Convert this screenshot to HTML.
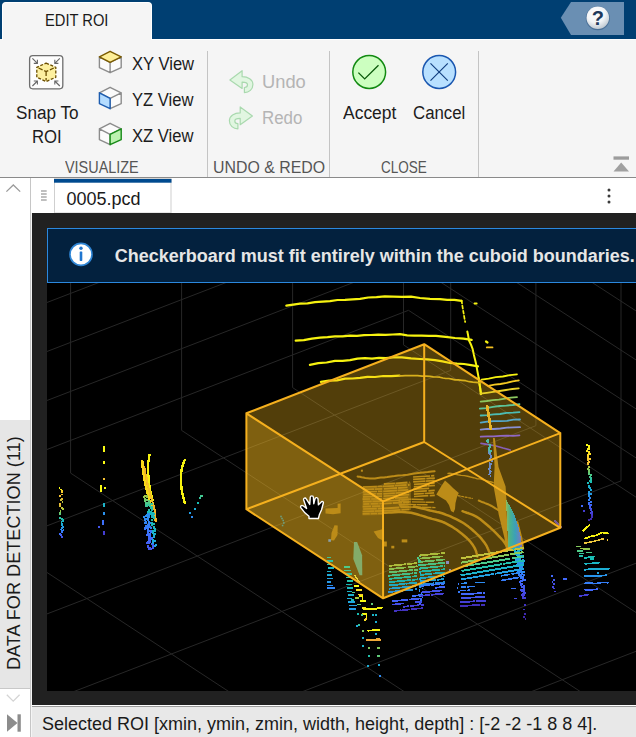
<!DOCTYPE html>
<html>
<head>
<meta charset="utf-8">
<title>Edit ROI</title>
<style>
html,body{margin:0;padding:0;}
body{width:636px;height:737px;overflow:hidden;position:relative;background:#f5f5f5;font-family:"Liberation Sans",sans-serif;color:#1a1a1a;}
.abs{position:absolute;}
#hdr{left:0;top:0;width:636px;height:39px;background:#003f72;}
#tab{left:2px;top:2px;width:150px;height:38px;background:#f5f5f5;border-radius:4px 4px 0 0;border:1px solid #fff;border-bottom:none;box-sizing:border-box;}
#tab span{position:absolute;left:42.3px;top:7.8px;font-size:17px;line-height:20px;color:#1a1a1a;white-space:nowrap;transform-origin:0 0;transform:scaleX(0.865);}
.t{position:absolute;white-space:nowrap;transform-origin:0 0;font-size:17.6px;color:#1c1c1c;line-height:20px;}
.dis{color:#b4b4b4;}
.lbl{position:absolute;white-space:nowrap;transform-origin:0 0;font-size:16.1px;color:#555;line-height:18px;}
.sep{position:absolute;width:1px;background:#c4c4c4;top:51px;height:126px;}
#tsb{left:0;top:177px;width:636px;height:1px;background:#8a8a8a;}
#tabbar{left:0;top:178px;width:636px;height:35px;background:#fff;}
#side{left:0;top:178px;width:30px;height:559px;background:#fff;border-right:1px solid #c6c6c6;}
#sidetab{left:0;top:419.5px;width:30px;height:269.5px;background:#e6e6e6;border-bottom:1px solid #c8c8c8;box-sizing:border-box;}
#dark{left:32px;top:213px;width:604px;height:492px;background:#212121;}
#axes{left:47px;top:228px;width:589px;height:463px;background:#000;overflow:hidden;}
#banner{left:47px;top:228px;width:600px;height:55px;background:#03213e;border:1px solid #2b88de;box-sizing:border-box;}
#status{left:32px;top:707px;width:604px;height:30px;background:#e8e8e8;}
</style>
</head>
<body>
<div id="hdr" class="abs"></div>
<div class="abs" style="left:152px;top:39px;width:484px;height:1px;background:#fff;"></div>
<div id="tab" class="abs"><span>EDIT ROI</span></div>

<!-- toolstrip content -->
<div class="t" style="left:15.6px;top:102.8px;transform:scaleX(0.975);">Snap To</div>
<div class="t" style="left:32.3px;top:126.8px;transform:scaleX(0.95);">ROI</div>
<div class="t" style="left:131.8px;top:53.8px;transform:scaleX(0.943);">XY View</div>
<div class="t" style="left:131.8px;top:89.8px;transform:scaleX(0.943);">YZ View</div>
<div class="t" style="left:131.8px;top:125.8px;transform:scaleX(0.943);">XZ View</div>
<div class="t dis" style="left:262.3px;top:71.8px;transform:scaleX(1.04);">Undo</div>
<div class="t dis" style="left:262.3px;top:107.8px;transform:scaleX(0.96);">Redo</div>
<div class="t" style="left:343px;top:102.8px;transform:scaleX(0.993);">Accept</div>
<div class="t" style="left:413.3px;top:102.8px;transform:scaleX(0.955);">Cancel</div>
<div class="lbl" style="left:65.4px;top:157.8px;transform:scaleX(0.896);">VISUALIZE</div>
<div class="lbl" style="left:212.6px;top:157.8px;transform:scaleX(0.987);">UNDO &amp; REDO</div>
<div class="lbl" style="left:380.6px;top:157.8px;transform:scaleX(0.84);">CLOSE</div>
<div class="sep" style="left:207px;"></div>
<div class="sep" style="left:329px;"></div>
<div class="sep" style="left:478px;"></div>

<svg class="abs" style="left:0;top:0;" width="636" height="178" viewBox="0 0 636 178">
<!-- help -->
<path d="M560.8,17.8 L571,2 L624,2 L624,35 L571,35 Z" fill="#6a8fb3"/>
<defs>
<radialGradient id="hg" cx="0.42" cy="0.3" r="0.75"><stop offset="0" stop-color="#ffffff"/><stop offset="0.55" stop-color="#f2f4f6"/><stop offset="1" stop-color="#b8c2cc"/></radialGradient>
</defs>
<circle cx="597.8" cy="18.3" r="12" fill="#2d5680" opacity="0.55"/>
<circle cx="597.8" cy="17.8" r="11.3" fill="url(#hg)"/>
<text x="597.8" y="25" text-anchor="middle" font-family="Liberation Sans, sans-serif" font-weight="bold" font-size="20" fill="#1f3a5c">?</text>
<!-- snap to roi -->
<rect x="29.6" y="55.6" width="33.2" height="33.2" rx="3.2" fill="#fdfdfd" stroke="#6e6e6e" stroke-width="1.3"/>
<path d="M46.1,63.1 L55.8,67.3 L55.8,77.3 L46.1,81.5 L36.8,77.3 L36.8,67.3 Z" fill="#fdf0a0"/>
<path d="M46.1,63.1 L55.8,67.3 L55.8,77.3 L46.1,81.5 L36.8,77.3 L36.8,67.3 Z" fill="none" stroke="#6b4e00" stroke-width="1.3" stroke-dasharray="3 1.6" stroke-linejoin="round"/>
<path d="M38.5,68 L46.1,71.6 L53.8,68 M46.1,71.6 L46.1,80.5" fill="none" stroke="#6b4e00" stroke-width="1.3" stroke-dasharray="4.5 1.8"/>
<g fill="none" stroke="#666" stroke-width="1.1">
<path d="M32.4,58.4 L37.4,63.4 M33.8,63.4 L37.4,63.4 L37.4,59.8"/>
<path d="M59.8,58.4 L54.8,63.4 M58.4,63.4 L54.8,63.4 L54.8,59.8"/>
<path d="M32.4,86 L37.4,81 M33.8,81 L37.4,81 L37.4,84.6"/>
<path d="M59.8,86 L54.8,81 M58.4,81 L54.8,81 L54.8,84.6"/>
</g>
<!-- cubes -->
<g id="cubeXY" stroke-linejoin="round" stroke-width="1.4">
<path d="M99.4,56.8 L110.1,62.4 L110.1,72.7 L99.4,67.6 Z M110.1,62.4 L121.2,56.8 L121.2,67.6 L110.1,72.7 Z" fill="#fbfbfb" stroke="#8c8c8c"/>
<path d="M110.1,51.3 L121.2,56.8 L110.1,62.4 L99.4,56.8 Z" fill="#fdee98" stroke="#7a5a00"/>
</g>
<g stroke-linejoin="round" stroke-width="1.4" transform="translate(0,36)">
<path d="M110.1,51.3 L121.2,56.8 L110.1,62.4 L99.4,56.8 Z M110.1,62.4 L121.2,56.8 L121.2,67.6 L110.1,72.7 Z" fill="#fbfbfb" stroke="#8c8c8c"/>
<path d="M99.4,56.8 L110.1,62.4 L110.1,72.7 L99.4,67.6 Z" fill="#b4dcff" stroke="#1c5cb0"/>
</g>
<g stroke-linejoin="round" stroke-width="1.4" transform="translate(0,72)">
<path d="M110.1,51.3 L121.2,56.8 L110.1,62.4 L99.4,56.8 Z M99.4,56.8 L110.1,62.4 L110.1,72.7 L99.4,67.6 Z" fill="#fbfbfb" stroke="#8c8c8c"/>
<path d="M110.1,62.4 L121.2,56.8 L121.2,67.6 L110.1,72.7 Z" fill="#bcf2b0" stroke="#178a17"/>
</g>
<!-- undo redo -->
<path id="undo" d="M229.9,79.9 L242.1,70.7 L242.1,76.7 C248,76.7 252.9,79.5 252.9,84.5 C252.9,89.5 249,92.6 244.4,92.6 L244.4,87.5 C246.5,87.5 247.5,86.3 247.5,84.8 C247.5,83 246,82.1 242.1,82.1 L242.1,88.5 Z" fill="#e1f6e1" stroke="#a9d9ae" stroke-width="1.2" stroke-linejoin="round"/>
<path d="M229.9,79.9 L242.1,70.7 L242.1,76.7 C248,76.7 252.9,79.5 252.9,84.5 C252.9,89.5 249,92.6 244.4,92.6 L244.4,87.5 C246.5,87.5 247.5,86.3 247.5,84.8 C247.5,83 246,82.1 242.1,82.1 L242.1,88.5 Z" fill="#e1f6e1" stroke="#a9d9ae" stroke-width="1.2" stroke-linejoin="round" transform="translate(482.3,36.2) scale(-1,1)"/>
<!-- accept cancel -->
<circle cx="369.2" cy="72" r="16.4" fill="#ccffc0" stroke="#128a12" stroke-width="1.5"/>
<path d="M358.4,72.6 L364.7,78.9 L378.5,65.2" fill="none" stroke="#0a5a0a" stroke-width="1.3"/>
<circle cx="439.2" cy="72" r="16.4" fill="#b8e0ff" stroke="#1a57b0" stroke-width="1.5"/>
<path d="M430.5,63.4 L447.8,80.7 M447.8,63.4 L430.5,80.7" fill="none" stroke="#123f80" stroke-width="1.2"/>
<!-- collapse -->
<rect x="613.5" y="156.4" width="15.5" height="3.3" fill="#9c9c9c"/>
<path d="M621.2,162.4 L629,171.4 L613.5,171.4 Z" fill="#a0a0a0"/>
</svg>
<div id="tsb" class="abs"></div>
<div id="tabbar" class="abs"></div>
<div id="side" class="abs"></div>
<div id="sidetab" class="abs"></div>
<svg class="abs" style="left:0;top:178px;" width="636" height="36" viewBox="0 178 636 36">
<path d="M6.4,191.6 L13.3,185 L20.2,191.6" fill="none" stroke="#9a9a9a" stroke-width="1.3"/>
<path d="M41,191 H46.7 M41,194 H46.7 M41,197 H46.7 M41,200 H46.7" stroke="#808080" stroke-width="1.2" fill="none"/>
<rect x="54.5" y="178.6" width="116.5" height="34.4" fill="#fff" stroke="#cfcfcf" stroke-width="1"/>
<rect x="54" y="179" width="117.5" height="3.7" fill="#004a8f"/>
<circle cx="609" cy="190" r="1.5" fill="#3a3a3a"/><circle cx="609" cy="196" r="1.5" fill="#3a3a3a"/><circle cx="609" cy="202" r="1.5" fill="#3a3a3a"/>
</svg>
<div class="abs" style="left:66.4px;top:188.8px;font-size:18px;line-height:20px;color:#1a1a1a;white-space:nowrap;">0005.pcd</div>
<div id="dark" class="abs"></div>
<div id="axes" class="abs"><!--SCENE_START--><svg style="position:absolute;left:0;top:0;" width="589" height="463" viewBox="47 228 589 463" shape-rendering="crispEdges">
<g shape-rendering="auto">
<line x1="70.6" y1="282.0" x2="70.6" y2="473.1" stroke="#272727" stroke-width="1"/>
<line x1="70.6" y1="473.1" x2="490.6" y2="748.2" stroke="#272727" stroke-width="1"/>
<line x1="181.6" y1="282.0" x2="181.6" y2="430.4" stroke="#272727" stroke-width="1"/>
<line x1="181.6" y1="430.4" x2="601.6" y2="705.5" stroke="#272727" stroke-width="1"/>
<line x1="292.6" y1="282.0" x2="292.6" y2="387.6" stroke="#272727" stroke-width="1"/>
<line x1="292.6" y1="387.6" x2="712.6" y2="662.7" stroke="#272727" stroke-width="1"/>
<line x1="403.5" y1="282.0" x2="403.5" y2="344.9" stroke="#272727" stroke-width="1"/>
<line x1="403.5" y1="344.9" x2="823.5" y2="620.0" stroke="#272727" stroke-width="1"/>
<line x1="-40.0" y1="515.5" x2="360.0" y2="777.5" stroke="#272727" stroke-width="1"/>
<line x1="450.7" y1="282.0" x2="450.7" y2="370.4" stroke="#272727" stroke-width="1"/>
<line x1="450.7" y1="370.4" x2="-309.3" y2="663.0" stroke="#272727" stroke-width="1"/>
<line x1="535.9" y1="282.0" x2="535.9" y2="425.7" stroke="#272727" stroke-width="1"/>
<line x1="535.9" y1="425.7" x2="-224.1" y2="718.3" stroke="#272727" stroke-width="1"/>
<line x1="621.0" y1="282.0" x2="621.0" y2="480.9" stroke="#272727" stroke-width="1"/>
<line x1="621.0" y1="480.9" x2="-139.0" y2="773.5" stroke="#272727" stroke-width="1"/>
<line x1="706.2" y1="282.0" x2="706.2" y2="536.2" stroke="#272727" stroke-width="1"/>
<line x1="706.2" y1="536.2" x2="-53.8" y2="828.8" stroke="#272727" stroke-width="1"/>
<line x1="791.4" y1="282.0" x2="791.4" y2="591.5" stroke="#272727" stroke-width="1"/>
<line x1="791.4" y1="591.5" x2="31.4" y2="884.1" stroke="#272727" stroke-width="1"/>
<line x1="408.5" y1="114.3" x2="8.5" y2="268.3" stroke="#272727" stroke-width="1"/>
<line x1="408.5" y1="114.3" x2="668.5" y2="283.0" stroke="#272727" stroke-width="1"/>
<line x1="408.5" y1="163.3" x2="8.5" y2="317.3" stroke="#272727" stroke-width="1"/>
<line x1="408.5" y1="163.3" x2="668.5" y2="332.0" stroke="#272727" stroke-width="1"/>
<line x1="408.5" y1="212.3" x2="8.5" y2="366.3" stroke="#272727" stroke-width="1"/>
<line x1="408.5" y1="212.3" x2="668.5" y2="381.0" stroke="#272727" stroke-width="1"/>
<line x1="408.5" y1="261.3" x2="8.5" y2="415.3" stroke="#272727" stroke-width="1"/>
<line x1="408.5" y1="261.3" x2="668.5" y2="430.0" stroke="#272727" stroke-width="1"/>
<line x1="408.5" y1="310.3" x2="8.5" y2="464.3" stroke="#272727" stroke-width="1"/>
<line x1="408.5" y1="310.3" x2="668.5" y2="479.0" stroke="#272727" stroke-width="1"/>
</g>
<g shape-rendering="auto">
<path d="M286.3,305.7 L300.0,303.6 L307.5,303.3 L315.0,302.2 L322.5,301.6 L330.0,301.1 L337.5,300.0 L345.0,299.8 L352.5,299.3 L360.0,298.8 L368.2,297.5 L376.5,297.2 L384.8,296.4 L393.0,296.6 L402.0,296.9 L411.0,296.6 L420.0,298.0 L430.0,298.8 L440.0,299.2 L447.2,299.8 L454.4,299.9 L461.6,300.9" fill="none" stroke="#f6f210" stroke-width="2.2" stroke-linecap="round" stroke-linejoin="round"/>
<path d="M295.7,340.7 L303.8,340.2 L311.9,338.6 L320.0,337.7 L327.5,337.2 L335.0,336.4 L342.5,336.3 L350.0,335.7 L357.0,335.8 L364.0,335.2 L371.0,335.0 L378.2,334.7 L385.5,334.8 L392.8,334.5 L400.0,334.2 L407.2,335.3 L414.4,335.6 L421.6,335.7 L428.8,335.9 L436.0,335.8 L445.5,336.8 L455.0,338.0 L463.4,338.6 L471.7,339.9" fill="none" stroke="#f6f210" stroke-width="2.2" stroke-linecap="round" stroke-linejoin="round"/>
<path d="M309.9,364.8 L318.3,363.2 L326.6,362.5 L335.0,360.9 L342.5,360.9 L350.0,360.1 L357.5,358.6 L365.0,358.2 L372.0,358.7 L379.0,357.9 L386.0,358.2 L393.0,357.3 L402.0,357.4 L411.0,358.4 L420.0,359.0 L427.5,359.4 L435.0,360.1 L442.5,361.4 L450.0,363.0 L457.0,363.7 L464.0,364.0 L471.0,365.1 L478.0,366.3" fill="none" stroke="#f6f210" stroke-width="2.2" stroke-linecap="round" stroke-linejoin="round"/>
<path d="M320.9,381.8 L328.9,380.6 L337.0,380.4 L345.0,378.6 L352.5,378.5 L360.0,377.8 L367.5,376.9 L375.0,377.0 L383.2,376.0 L391.3,376.2 L399.5,375.7" fill="none" stroke="#f6f210" stroke-width="2.2" stroke-linecap="round" stroke-linejoin="round"/>
<path d="M461.6,300.5 L462.3,305.4 L463.0,309.7 L463.7,313.7 L464.5,318.6 L465.2,322.0" fill="none" stroke="#f6f210" stroke-width="1.7" stroke-linecap="round" stroke-linejoin="round" stroke-dasharray="3 2.2"/>
<path d="M467.3,331.4 L468.1,335.3 L469.0,340.5 L470.8,344.2 L472.6,348.9 L473.9,354.9 L475.2,360.2 L476.2,364.5 L477.3,370.6 L477.9,373.7 L478.6,377.7 L479.2,382.3 L479.8,385.8 L480.4,389.8 L481.0,394.0" fill="none" stroke="#f6f210" stroke-width="2.0" stroke-linecap="round" stroke-linejoin="round"/>
<path d="M474.6,303.4 L476.6,303.4" fill="none" stroke="#f6f210" stroke-width="2" stroke-linecap="round" stroke-linejoin="round"/>
<path d="M486.0,341.5 L487.5,342.5" fill="none" stroke="#f6f210" stroke-width="2.2" stroke-linecap="round" stroke-linejoin="round"/>
<path d="M486.8,347.4 L492.5,347.4" fill="none" stroke="#f4c020" stroke-width="1.8" stroke-linecap="round" stroke-linejoin="round"/>
</g>
<rect x="58.5" y="487.2" width="1.8" height="1.8" fill="#f9fb14"/>
<rect x="60.0" y="488.5" width="1.8" height="1.8" fill="#faec1d"/>
<rect x="61.2" y="490.1" width="1.8" height="1.8" fill="#fbdd26"/>
<rect x="60.9" y="491.4" width="1.8" height="1.8" fill="#fdce2f"/>
<rect x="61.1" y="493.5" width="1.8" height="1.8" fill="#fac532"/>
<rect x="58.9" y="494.9" width="1.8" height="1.8" fill="#f4c132"/>
<rect x="61.4" y="498.1" width="1.8" height="1.8" fill="#e6ba33"/>
<rect x="59.7" y="499.0" width="1.8" height="1.8" fill="#d1bf38"/>
<rect x="61.6" y="500.7" width="1.8" height="1.8" fill="#bcc33c"/>
<rect x="59.3" y="502.7" width="1.8" height="1.8" fill="#f2bf32"/>
<rect x="59.4" y="503.7" width="1.8" height="1.8" fill="#ecba32"/>
<rect x="58.7" y="505.3" width="1.8" height="1.8" fill="#d9bd36"/>
<rect x="61.4" y="507.1" width="1.8" height="1.8" fill="#c4c13a"/>
<rect x="61.7" y="508.3" width="1.8" height="1.8" fill="#aec63f"/>
<rect x="59.5" y="510.0" width="1.8" height="1.8" fill="#95c94e"/>
<rect x="59.2" y="511.5" width="1.8" height="1.8" fill="#7aca64"/>
<rect x="59.0" y="513.0" width="1.8" height="1.8" fill="#60ca7a"/>
<rect x="61.1" y="517.8" width="1.8" height="1.8" fill="#27c1a9"/>
<rect x="58.8" y="517.3" width="1.8" height="1.8" fill="#27c1a9"/>
<rect x="62.2" y="518.9" width="1.8" height="1.8" fill="#19bdb6"/>
<rect x="60.5" y="521.0" width="1.8" height="1.8" fill="#1bb6c3"/>
<rect x="62.4" y="520.4" width="1.8" height="1.8" fill="#1bb6c3"/>
<rect x="61.4" y="522.6" width="1.8" height="1.8" fill="#1cb0d0"/>
<rect x="61.3" y="522.6" width="1.8" height="1.8" fill="#1cb0d0"/>
<rect x="61.3" y="524.2" width="1.8" height="1.8" fill="#1eaadc"/>
<rect x="61.7" y="525.7" width="1.8" height="1.8" fill="#23a1e3"/>
<rect x="61.2" y="526.8" width="1.8" height="1.8" fill="#2797ea"/>
<rect x="61.1" y="526.6" width="1.8" height="1.8" fill="#2797ea"/>
<rect x="62.6" y="528.7" width="1.8" height="1.8" fill="#2c8ef2"/>
<rect x="60.3" y="528.6" width="1.8" height="1.8" fill="#2c8ef2"/>
<rect x="60.5" y="530.2" width="1.8" height="1.8" fill="#3283f6"/>
<rect x="61.7" y="529.6" width="1.8" height="1.8" fill="#3283f6"/>
<rect x="60.7" y="531.3" width="1.8" height="1.8" fill="#3878f9"/>
<rect x="60.8" y="531.6" width="1.8" height="1.8" fill="#3878f9"/>
<rect x="58.9" y="532.9" width="1.8" height="1.8" fill="#3e6dfc"/>
<rect x="59.7" y="534.3" width="1.8" height="1.8" fill="#4262f7"/>
<rect x="60.7" y="536.4" width="1.8" height="1.8" fill="#4456ec"/>
<rect x="61.6" y="535.9" width="1.8" height="1.8" fill="#4456ec"/>
<rect x="102.6" y="445.5" width="2.2" height="6" fill="#f9fb14"/>
<rect x="103.2" y="460.5" width="2.2" height="3" fill="#f9fb14"/>
<rect x="103.0" y="477.5" width="2.2" height="2" fill="#f4c032"/>
<rect x="99.5" y="484.5" width="2.2" height="7" fill="#f9fb14"/>
<rect x="103.5" y="486.5" width="2.2" height="2" fill="#f9fb14"/>
<rect x="102.8" y="502.5" width="2.2" height="4" fill="#1cb4c8"/>
<rect x="102.8" y="512.2" width="2.2" height="2.5" fill="#2a92ee"/>
<rect x="102.2" y="519.5" width="2.2" height="5" fill="#3d70fb"/>
<rect x="98.2" y="525.5" width="2.2" height="2" fill="#4456ec"/>
<rect x="102.6" y="530.5" width="2.2" height="4" fill="#443dd2"/>
<path d="M149.6,454.7 L149.5,455.3 L149.3,456.2 L149.2,457.3 L149.0,458.4 L148.8,459.6 L148.6,460.8 L148.4,462.0 L148.3,463.0 L148.2,463.9 L148.1,464.6 L148.1,465.3 L148.0,466.0 L148.0,466.8 L148.0,467.6 L148.0,468.7 L148.1,470.0 L148.2,471.6 L148.3,473.4 L148.4,475.4 L148.6,477.6 L148.8,479.8 L149.0,481.9 L149.2,484.0 L149.5,486.0 L149.8,487.9 L150.2,490.0 L150.6,492.0 L151.1,494.0 L151.5,495.9 L151.9,497.5 L152.3,498.9 L152.5,500.0" fill="none" stroke="#f6f210" stroke-width="2.3" stroke-linecap="round" stroke-linejoin="round"/>
<path d="M142.2,460.7 L142.3,461.4 L142.3,462.3 L142.4,463.4 L142.5,464.6 L142.6,465.9 L142.7,467.3 L142.8,468.6 L143.0,470.0 L143.2,471.4 L143.4,472.7 L143.6,474.2 L143.8,475.6 L144.1,477.2 L144.4,478.7 L144.7,480.3 L145.0,482.0 L145.4,483.8 L145.8,485.6 L146.2,487.6 L146.7,489.6 L147.2,491.5 L147.7,493.5 L148.1,495.3 L148.5,497.0 L148.9,498.6 L149.3,500.3 L149.6,501.9 L150.0,503.4 L150.3,504.9 L150.6,506.1 L150.8,507.2 L151.0,508.0" fill="none" stroke="#f8d818" stroke-width="2.5" stroke-linecap="round" stroke-linejoin="round"/>
<path d="M144.4,467.4 L144.6,468.5 L144.8,470.0 L145.1,471.8 L145.5,473.8 L145.8,475.9 L146.2,478.0 L146.6,480.1 L147.0,482.0 L147.4,483.9 L147.9,485.8 L148.4,487.7 L148.9,489.6 L149.5,491.5 L150.0,493.4 L150.5,495.2 L151.0,497.0 L151.5,498.7 L152.0,500.4 L152.5,502.1 L153.0,503.8 L153.5,505.4 L153.9,506.9 L154.3,508.5 L154.6,510.0 L154.9,511.5 L155.1,513.1 L155.2,514.8 L155.3,516.3 L155.4,517.8 L155.5,519.1 L155.5,520.2 L155.6,521.0" fill="none" stroke="#f2b428" stroke-width="2.1" stroke-linecap="round" stroke-linejoin="round"/>
<path d="M146.4,476.0 L146.6,477.1 L146.8,478.5 L147.1,480.2 L147.5,482.1 L147.8,484.1 L148.2,486.2 L148.6,488.2 L149.0,490.0 L149.5,491.8 L150.0,493.8 L150.6,495.9 L151.2,497.9 L151.7,499.8 L152.2,501.5 L152.7,502.9 L153.0,504.0" fill="none" stroke="#f4c428" stroke-width="1.8" stroke-linecap="round" stroke-linejoin="round"/>
<rect x="145.7" y="495.3" width="2.0" height="2.0" fill="#a5c841"/>
<rect x="144.0" y="495.1" width="2.0" height="2.0" fill="#a5c841"/>
<rect x="143.3" y="496.2" width="2.0" height="2.0" fill="#96c94d"/>
<rect x="146.4" y="496.4" width="2.0" height="2.0" fill="#96c94d"/>
<rect x="143.8" y="497.5" width="2.0" height="2.0" fill="#87c959"/>
<rect x="144.3" y="498.7" width="2.0" height="2.0" fill="#78ca66"/>
<rect x="145.6" y="498.6" width="2.0" height="2.0" fill="#78ca66"/>
<rect x="148.4" y="500.0" width="2.0" height="2.0" fill="#6aca72"/>
<rect x="143.7" y="500.3" width="2.0" height="2.0" fill="#6aca72"/>
<rect x="147.5" y="501.3" width="2.0" height="2.0" fill="#5bcb7e"/>
<rect x="147.9" y="500.9" width="2.0" height="2.0" fill="#5bcb7e"/>
<rect x="146.5" y="502.1" width="2.0" height="2.0" fill="#4dca89"/>
<rect x="145.3" y="502.2" width="2.0" height="2.0" fill="#4dca89"/>
<rect x="147.5" y="502.5" width="2.0" height="2.0" fill="#4dca89"/>
<rect x="148.0" y="504.0" width="2.0" height="2.0" fill="#44c891"/>
<rect x="145.4" y="503.7" width="2.0" height="2.0" fill="#44c891"/>
<rect x="144.6" y="505.0" width="2.0" height="2.0" fill="#3ac699"/>
<rect x="145.6" y="504.8" width="2.0" height="2.0" fill="#3ac699"/>
<rect x="148.7" y="505.0" width="2.0" height="2.0" fill="#3ac699"/>
<rect x="149.8" y="502.9" width="2.0" height="2.0" fill="#3ac699"/>
<rect x="150.5" y="502.7" width="2.0" height="2.0" fill="#3ac699"/>
<rect x="146.8" y="504.3" width="2.0" height="2.0" fill="#34c49e"/>
<rect x="151.0" y="505.5" width="2.0" height="2.0" fill="#2ec3a3"/>
<rect x="150.9" y="505.8" width="2.0" height="2.0" fill="#2ec3a3"/>
<rect x="149.9" y="506.7" width="2.0" height="2.0" fill="#28c2a8"/>
<rect x="151.0" y="508.3" width="2.0" height="2.0" fill="#22c0ad"/>
<rect x="147.8" y="508.5" width="2.0" height="2.0" fill="#22c0ad"/>
<rect x="151.1" y="509.4" width="2.0" height="2.0" fill="#1cbfb2"/>
<rect x="148.9" y="510.5" width="2.0" height="2.0" fill="#19bdb6"/>
<rect x="150.0" y="511.0" width="2.0" height="2.0" fill="#19bdb6"/>
<rect x="147.1" y="511.0" width="2.0" height="2.0" fill="#19bdb6"/>
<rect x="151.6" y="511.8" width="2.0" height="2.0" fill="#1abbbb"/>
<rect x="151.5" y="511.8" width="2.0" height="2.0" fill="#1abbbb"/>
<rect x="150.0" y="512.3" width="2.0" height="2.0" fill="#1abbbb"/>
<rect x="151.2" y="513.8" width="2.0" height="2.0" fill="#1ab8bf"/>
<rect x="152.7" y="513.1" width="2.0" height="2.0" fill="#1ab8bf"/>
<rect x="150.3" y="513.2" width="2.0" height="2.0" fill="#1ab8bf"/>
<rect x="151.1" y="514.7" width="2.0" height="2.0" fill="#1bb6c4"/>
<rect x="150.7" y="514.5" width="2.0" height="2.0" fill="#1bb6c4"/>
<rect x="152.3" y="515.0" width="2.0" height="2.0" fill="#1bb6c4"/>
<rect x="152.6" y="516.4" width="2.0" height="2.0" fill="#1cb4c8"/>
<rect x="150.9" y="515.8" width="2.0" height="2.0" fill="#1cb4c8"/>
<rect x="150.5" y="516.1" width="2.0" height="2.0" fill="#1cb4c8"/>
<rect x="148.3" y="513.0" width="2.0" height="2.0" fill="#2a92ee"/>
<rect x="147.3" y="513.1" width="2.0" height="2.0" fill="#2a92ee"/>
<rect x="146.6" y="512.7" width="2.0" height="2.0" fill="#2a92ee"/>
<rect x="145.1" y="514.6" width="2.0" height="2.0" fill="#2b90f0"/>
<rect x="145.5" y="513.9" width="2.0" height="2.0" fill="#2b90f0"/>
<rect x="147.7" y="515.7" width="2.0" height="2.0" fill="#2c8ef1"/>
<rect x="144.7" y="515.2" width="2.0" height="2.0" fill="#2c8ef1"/>
<rect x="148.3" y="515.1" width="2.0" height="2.0" fill="#2c8ef1"/>
<rect x="143.1" y="516.4" width="2.0" height="2.0" fill="#2d8df2"/>
<rect x="147.0" y="516.5" width="2.0" height="2.0" fill="#2d8df2"/>
<rect x="146.6" y="516.3" width="2.0" height="2.0" fill="#2d8df2"/>
<rect x="143.8" y="517.8" width="2.0" height="2.0" fill="#2e8bf3"/>
<rect x="144.2" y="517.9" width="2.0" height="2.0" fill="#2e8bf3"/>
<rect x="145.3" y="517.8" width="2.0" height="2.0" fill="#2e8bf3"/>
<rect x="144.1" y="518.8" width="2.0" height="2.0" fill="#2f89f4"/>
<rect x="147.0" y="519.1" width="2.0" height="2.0" fill="#2f89f4"/>
<rect x="146.9" y="519.3" width="2.0" height="2.0" fill="#2f89f4"/>
<rect x="147.8" y="520.5" width="2.0" height="2.0" fill="#3087f5"/>
<rect x="145.2" y="520.6" width="2.0" height="2.0" fill="#3087f5"/>
<rect x="149.5" y="521.8" width="2.0" height="2.0" fill="#3185f5"/>
<rect x="144.9" y="521.6" width="2.0" height="2.0" fill="#3185f5"/>
<rect x="144.0" y="521.7" width="2.0" height="2.0" fill="#3185f5"/>
<rect x="148.3" y="522.4" width="2.0" height="2.0" fill="#3283f6"/>
<rect x="147.7" y="522.3" width="2.0" height="2.0" fill="#3283f6"/>
<rect x="147.7" y="523.0" width="2.0" height="2.0" fill="#3283f6"/>
<rect x="146.8" y="524.1" width="2.0" height="2.0" fill="#3481f6"/>
<rect x="147.9" y="523.6" width="2.0" height="2.0" fill="#3481f6"/>
<rect x="144.5" y="524.7" width="2.0" height="2.0" fill="#357ef7"/>
<rect x="147.0" y="525.1" width="2.0" height="2.0" fill="#357ef7"/>
<rect x="145.0" y="524.8" width="2.0" height="2.0" fill="#357ef7"/>
<rect x="150.0" y="526.6" width="2.0" height="2.0" fill="#367cf7"/>
<rect x="144.4" y="526.6" width="2.0" height="2.0" fill="#367cf7"/>
<rect x="148.6" y="526.1" width="2.0" height="2.0" fill="#367cf7"/>
<rect x="147.2" y="527.4" width="2.0" height="2.0" fill="#377af8"/>
<rect x="144.2" y="527.6" width="2.0" height="2.0" fill="#377af8"/>
<rect x="145.2" y="527.4" width="2.0" height="2.0" fill="#377af8"/>
<rect x="146.7" y="528.4" width="2.0" height="2.0" fill="#3878f9"/>
<rect x="147.4" y="528.3" width="2.0" height="2.0" fill="#3878f9"/>
<rect x="148.7" y="530.2" width="2.0" height="2.0" fill="#3976f9"/>
<rect x="146.9" y="530.0" width="2.0" height="2.0" fill="#3976f9"/>
<rect x="150.3" y="530.1" width="2.0" height="2.0" fill="#3976f9"/>
<rect x="150.0" y="531.3" width="2.0" height="2.0" fill="#3b74fa"/>
<rect x="149.5" y="531.0" width="2.0" height="2.0" fill="#3b74fa"/>
<rect x="148.9" y="532.5" width="2.0" height="2.0" fill="#3c72fa"/>
<rect x="147.1" y="532.5" width="2.0" height="2.0" fill="#3c72fa"/>
<rect x="146.8" y="532.3" width="2.0" height="2.0" fill="#3c72fa"/>
<rect x="147.0" y="533.6" width="2.0" height="2.0" fill="#3d70fb"/>
<rect x="146.2" y="533.9" width="2.0" height="2.0" fill="#3d70fb"/>
<rect x="146.9" y="533.6" width="2.0" height="2.0" fill="#3d70fb"/>
<rect x="148.2" y="534.6" width="2.0" height="2.0" fill="#3e6efc"/>
<rect x="149.2" y="534.9" width="2.0" height="2.0" fill="#3e6efc"/>
<rect x="148.8" y="536.1" width="2.0" height="2.0" fill="#3f6cfc"/>
<rect x="147.5" y="535.6" width="2.0" height="2.0" fill="#3f6cfc"/>
<rect x="147.5" y="536.8" width="2.0" height="2.0" fill="#406afd"/>
<rect x="150.7" y="537.2" width="2.0" height="2.0" fill="#406afd"/>
<rect x="151.1" y="537.2" width="2.0" height="2.0" fill="#406afd"/>
<rect x="150.3" y="538.0" width="2.0" height="2.0" fill="#4168fc"/>
<rect x="150.0" y="538.0" width="2.0" height="2.0" fill="#4168fc"/>
<rect x="148.4" y="539.3" width="2.0" height="2.0" fill="#4166fa"/>
<rect x="149.2" y="539.2" width="2.0" height="2.0" fill="#4166fa"/>
<rect x="148.8" y="540.8" width="2.0" height="2.0" fill="#4263f8"/>
<rect x="147.4" y="540.9" width="2.0" height="2.0" fill="#4263f8"/>
<rect x="147.5" y="542.1" width="2.0" height="2.0" fill="#4261f6"/>
<rect x="145.9" y="541.8" width="2.0" height="2.0" fill="#4261f6"/>
<rect x="146.7" y="542.2" width="2.0" height="2.0" fill="#4261f6"/>
<rect x="151.3" y="543.4" width="2.0" height="2.0" fill="#425ff4"/>
<rect x="151.9" y="543.5" width="2.0" height="2.0" fill="#425ff4"/>
<rect x="151.4" y="543.1" width="2.0" height="2.0" fill="#425ff4"/>
<rect x="151.9" y="544.2" width="2.0" height="2.0" fill="#435df2"/>
<rect x="151.7" y="544.6" width="2.0" height="2.0" fill="#435df2"/>
<rect x="152.0" y="544.6" width="2.0" height="2.0" fill="#435df2"/>
<rect x="146.9" y="545.7" width="2.0" height="2.0" fill="#435af0"/>
<rect x="147.4" y="545.2" width="2.0" height="2.0" fill="#435af0"/>
<rect x="147.0" y="545.5" width="2.0" height="2.0" fill="#435af0"/>
<rect x="149.1" y="546.6" width="2.0" height="2.0" fill="#4358ee"/>
<rect x="148.9" y="547.0" width="2.0" height="2.0" fill="#4358ee"/>
<rect x="152.3" y="547.2" width="2.0" height="2.0" fill="#4358ee"/>
<rect x="147.9" y="547.7" width="2.0" height="2.0" fill="#4456ec"/>
<rect x="150.2" y="547.9" width="2.0" height="2.0" fill="#4456ec"/>
<rect x="152.6" y="516.1" width="2.0" height="2.0" fill="#24c1ab"/>
<rect x="152.5" y="517.4" width="2.0" height="2.0" fill="#21c0ae"/>
<rect x="151.3" y="518.8" width="2.0" height="2.0" fill="#1ebfb0"/>
<rect x="150.9" y="521.9" width="2.0" height="2.0" fill="#19bcb8"/>
<rect x="152.9" y="522.9" width="2.0" height="2.0" fill="#1abbba"/>
<rect x="151.1" y="524.1" width="2.0" height="2.0" fill="#1ababc"/>
<rect x="152.8" y="525.8" width="2.0" height="2.0" fill="#1ab9bf"/>
<rect x="152.7" y="526.6" width="2.0" height="2.0" fill="#1bb8c1"/>
<rect x="153.7" y="528.4" width="2.0" height="2.0" fill="#1bb6c3"/>
<rect x="151.6" y="529.5" width="2.0" height="2.0" fill="#1bb5c6"/>
<rect x="153.9" y="530.3" width="2.0" height="2.0" fill="#1cb4c8"/>
<rect x="152.2" y="532.0" width="2.0" height="2.0" fill="#1cb3ca"/>
<rect x="153.7" y="533.3" width="2.0" height="2.0" fill="#1cb2cd"/>
<rect x="153.4" y="534.3" width="2.0" height="2.0" fill="#1cb0cf"/>
<rect x="153.0" y="536.2" width="2.0" height="2.0" fill="#1daed4"/>
<rect x="152.1" y="539.0" width="2.0" height="2.0" fill="#1eacd8"/>
<rect x="154.3" y="540.0" width="2.0" height="2.0" fill="#1eabdb"/>
<rect x="152.3" y="541.1" width="2.0" height="2.0" fill="#1ea9dd"/>
<rect x="152.4" y="542.4" width="2.0" height="2.0" fill="#1fa8de"/>
<rect x="154.6" y="543.6" width="2.0" height="2.0" fill="#20a6df"/>
<rect x="153.5" y="545.2" width="2.0" height="2.0" fill="#21a4e1"/>
<path d="M184.7,460.0 L184.5,460.5 L184.2,461.2 L183.9,462.1 L183.5,463.0 L183.2,464.0 L182.8,465.0 L182.5,466.0 L182.2,467.0 L182.0,468.0 L181.8,468.9 L181.6,469.9 L181.4,470.9 L181.3,472.0 L181.2,473.0 L181.1,474.0 L181.0,475.0 L180.9,476.0 L180.9,477.0 L180.9,478.0 L180.9,479.0 L180.9,480.0 L180.9,481.0 L180.9,482.0 L181.0,483.0 L181.1,484.0 L181.1,484.9 L181.2,485.8 L181.3,486.7 L181.4,487.7 L181.5,488.7 L181.7,489.8 L181.9,491.0 L182.2,492.4 L182.5,494.0 L182.9,495.8 L183.4,497.6 L183.8,499.3 L184.2,500.9 L184.5,502.2 L184.7,503.2" fill="none" stroke="#f6f210" stroke-width="2.5" stroke-linecap="round" stroke-linejoin="round"/>
<rect x="200.3" y="494.9" width="2.2" height="2.2" fill="#45c890"/>
<rect x="198.7" y="496.9" width="2.2" height="2.2" fill="#35c49d"/>
<rect x="196.9" y="501.9" width="2.2" height="2.2" fill="#19beb4"/>
<rect x="193.7" y="507.5" width="2.2" height="2.2" fill="#1daed4"/>
<rect x="189.1" y="512.2" width="2.2" height="2.2" fill="#249ee5"/>
<rect x="191.2" y="516.0" width="2.2" height="2.2" fill="#2d8cf3"/>
<polygon points="246.4,413.3 424.2,344.2 560.3,433.1 383.0,501.4" fill="#f5b91e" fill-opacity="0.335"/>
<polygon points="383.0,501.4 560.3,433.1 560.3,527.8 383.1,598.3" fill="#f5b91e" fill-opacity="0.35"/>
<polygon points="246.4,413.3 383.0,501.4 383.1,598.3 246.4,509.2" fill="#f4b81e" fill-opacity="0.52"/>
<g shape-rendering="auto">
<path d="M478.6,377.9 L479.2,381.7 L479.7,385.2 L480.2,388.1 L480.6,391.3 L481.0,394.0" fill="none" stroke="#f6f210" stroke-width="2.0" stroke-linecap="round" stroke-linejoin="round"/>
<path d="M481.6,379.6 L488.7,378.6 L495.8,377.2 L502.8,376.5 L509.9,375.1 L517.0,374.3" fill="none" stroke="#f6f210" stroke-width="1.8" stroke-linecap="round" stroke-linejoin="round"/>
<path d="M488.3,385.8 L494.4,384.7 L500.5,384.0 L506.6,382.9 L512.7,381.3 L518.8,380.4" fill="none" stroke="#f4c822" stroke-width="1.8" stroke-linecap="round" stroke-linejoin="round"/>
<path d="M480.4,393.7 L486.8,392.8 L493.2,391.9 L499.6,391.0 L506.0,390.0 L512.4,389.0 L518.8,388.3" fill="none" stroke="#e8d028" stroke-width="1.8" stroke-linecap="round" stroke-linejoin="round"/>
<path d="M480.7,401.6 L486.8,401.0 L492.8,400.1 L498.9,399.6 L504.9,398.6 L510.9,397.6 L517.0,397.1" fill="none" stroke="#8cc860" stroke-width="1.8" stroke-linecap="round" stroke-linejoin="round"/>
<path d="M479.8,408.7 L486.4,408.1 L493.0,406.9 L499.6,406.0 L506.3,405.6 L512.9,405.0 L519.5,404.2" fill="none" stroke="#5cc498" stroke-width="1.8" stroke-linecap="round" stroke-linejoin="round"/>
<path d="M480.7,415.5 L487.2,415.2 L493.6,414.4 L500.1,414.0 L506.6,412.9 L513.0,412.7 L519.5,412.1" fill="none" stroke="#4cbcb4" stroke-width="1.8" stroke-linecap="round" stroke-linejoin="round"/>
<path d="M480.7,422.7 L487.2,421.7 L493.8,421.2 L500.4,421.2 L506.9,420.8 L513.5,419.7 L520.0,419.5" fill="none" stroke="#54a8cc" stroke-width="1.8" stroke-linecap="round" stroke-linejoin="round"/>
<path d="M480.7,429.7 L487.2,428.9 L493.8,429.0 L500.4,428.5 L506.9,427.7 L513.5,427.3 L520.0,427.1" fill="none" stroke="#8890d4" stroke-width="1.8" stroke-linecap="round" stroke-linejoin="round"/>
<path d="M480.7,436.7 L487.2,436.3 L493.6,436.3 L500.1,435.8 L506.6,435.6 L513.0,435.9 L519.5,435.3" fill="none" stroke="#9068c4" stroke-width="1.8" stroke-linecap="round" stroke-linejoin="round"/>
<path d="M481.0,443.4 L488.5,444.6 L496.0,446.0 L503.1,448.1 L510.3,450.0" fill="none" stroke="#8860b8" stroke-width="1.6" stroke-linecap="round" stroke-linejoin="round"/>
<path d="M357.6,476.5 L358.7,476.8 L360.0,476.8 L361.5,477.3 L363.3,477.6 L365.3,478.0 L367.5,478.2 L369.8,478.4 L372.3,478.4 L374.9,478.4 L377.8,478.0 L380.8,477.6 L384.0,477.4 L387.3,477.1 L390.8,476.4 L394.5,476.0 L398.3,475.4 L402.6,475.3 L407.5,474.8 L412.8,473.8 L418.1,473.0 L423.2,472.4 L427.8,472.0 L431.7,471.4 L434.6,471.2" fill="none" stroke="#bc8c18" stroke-width="2.0" stroke-linecap="round" stroke-linejoin="round"/>
<rect x="360.9" y="469.7" width="2.0" height="2.0" fill="#bc8c18"/>
<path d="M448.0,473.5 L449.7,473.2 L452.1,473.7 L454.8,474.0 L457.9,474.8 L461.1,475.4 L464.4,475.6 L467.6,476.2 L470.6,477.0 L473.6,477.7 L476.8,478.7 L480.1,478.9 L483.3,479.8 L486.4,480.6 L489.1,481.4 L491.5,482.0 L493.2,482.6" fill="none" stroke="#bc8c18" stroke-width="1.4" stroke-linecap="round" stroke-linejoin="round"/>
<polygon points="362.5,486.0 383.0,485.5 383.0,515.0 362.5,515.5" fill="#bc8c18" opacity="0.4"/>
<polygon points="383.0,485.0 411.0,482.5 411.0,510.0 383.0,512.5" fill="#bc8c18" opacity="0.4"/>
<path d="M399.5,375.8 L401.9,375.8 L405.1,375.6 L408.9,375.6 L413.2,375.7 L417.6,375.7 L422.0,376.2 L426.2,376.1 L430.0,376.4 L433.4,376.9 L436.6,377.0 L439.8,377.2 L442.8,378.0 L445.8,378.5 L448.8,378.5 L451.9,379.1 L455.0,379.8 L458.3,379.9 L461.9,380.3 L465.6,380.7 L469.3,381.7 L472.8,382.1 L475.9,382.3 L478.5,382.7 L480.5,383.0" fill="none" stroke="#d8b01c" stroke-width="1.7" stroke-linecap="round" stroke-linejoin="round"/>
<line x1="363.0" y1="487.0" x2="376.9" y2="486.6" stroke="#bc8c18" stroke-width="1.7"/>
<line x1="377.5" y1="486.5" x2="382.7" y2="486.4" stroke="#bc8c18" stroke-width="1.7"/>
<line x1="363.3" y1="489.4" x2="374.1" y2="489.1" stroke="#bc8c18" stroke-width="1.7"/>
<line x1="374.6" y1="489.1" x2="382.3" y2="488.9" stroke="#bc8c18" stroke-width="1.7"/>
<line x1="363.0" y1="491.9" x2="377.0" y2="491.5" stroke="#bc8c18" stroke-width="1.7"/>
<line x1="377.9" y1="491.4" x2="382.4" y2="491.3" stroke="#bc8c18" stroke-width="1.7"/>
<line x1="363.3" y1="494.3" x2="375.9" y2="493.9" stroke="#bc8c18" stroke-width="1.7"/>
<line x1="376.5" y1="493.9" x2="382.2" y2="493.8" stroke="#bc8c18" stroke-width="1.7"/>
<line x1="363.0" y1="496.8" x2="373.7" y2="496.5" stroke="#bc8c18" stroke-width="1.7"/>
<line x1="374.3" y1="496.4" x2="382.0" y2="496.2" stroke="#bc8c18" stroke-width="1.7"/>
<line x1="362.6" y1="499.2" x2="370.3" y2="499.0" stroke="#bc8c18" stroke-width="1.7"/>
<line x1="371.2" y1="499.0" x2="378.4" y2="498.8" stroke="#bc8c18" stroke-width="1.7"/>
<line x1="379.1" y1="498.8" x2="382.2" y2="498.7" stroke="#bc8c18" stroke-width="1.7"/>
<line x1="363.0" y1="501.7" x2="371.8" y2="501.4" stroke="#bc8c18" stroke-width="1.7"/>
<line x1="372.3" y1="501.4" x2="381.4" y2="501.1" stroke="#bc8c18" stroke-width="1.7"/>
<line x1="363.3" y1="504.1" x2="369.4" y2="503.9" stroke="#bc8c18" stroke-width="1.7"/>
<line x1="370.6" y1="503.9" x2="378.5" y2="503.7" stroke="#bc8c18" stroke-width="1.7"/>
<line x1="379.3" y1="503.6" x2="382.3" y2="503.6" stroke="#bc8c18" stroke-width="1.7"/>
<line x1="362.7" y1="506.6" x2="371.0" y2="506.3" stroke="#bc8c18" stroke-width="1.7"/>
<line x1="372.0" y1="506.3" x2="380.4" y2="506.1" stroke="#bc8c18" stroke-width="1.7"/>
<line x1="381.1" y1="506.0" x2="382.4" y2="506.0" stroke="#bc8c18" stroke-width="1.7"/>
<line x1="363.2" y1="509.0" x2="376.8" y2="508.6" stroke="#bc8c18" stroke-width="1.7"/>
<line x1="378.0" y1="508.6" x2="382.7" y2="508.4" stroke="#bc8c18" stroke-width="1.7"/>
<line x1="362.6" y1="511.5" x2="374.1" y2="511.2" stroke="#bc8c18" stroke-width="1.7"/>
<line x1="374.6" y1="511.1" x2="382.9" y2="510.9" stroke="#bc8c18" stroke-width="1.7"/>
<line x1="362.6" y1="513.9" x2="369.8" y2="513.7" stroke="#bc8c18" stroke-width="1.7"/>
<line x1="370.6" y1="513.7" x2="377.2" y2="513.5" stroke="#bc8c18" stroke-width="1.7"/>
<line x1="378.0" y1="513.5" x2="382.8" y2="513.3" stroke="#bc8c18" stroke-width="1.7"/>
<line x1="383.8" y1="484.0" x2="395.1" y2="483.3" stroke="#bc8c18" stroke-width="1.8"/>
<line x1="395.5" y1="483.3" x2="407.5" y2="482.5" stroke="#bc8c18" stroke-width="1.8"/>
<line x1="408.9" y1="482.4" x2="409.6" y2="482.4" stroke="#bc8c18" stroke-width="1.8"/>
<line x1="383.0" y1="486.4" x2="394.4" y2="485.8" stroke="#bc8c18" stroke-width="1.8"/>
<line x1="394.9" y1="485.7" x2="406.6" y2="485.0" stroke="#bc8c18" stroke-width="1.8"/>
<line x1="407.9" y1="485.0" x2="409.7" y2="484.8" stroke="#bc8c18" stroke-width="1.8"/>
<line x1="383.8" y1="488.9" x2="397.2" y2="488.0" stroke="#bc8c18" stroke-width="1.8"/>
<line x1="398.1" y1="488.0" x2="407.6" y2="487.4" stroke="#bc8c18" stroke-width="1.8"/>
<line x1="409.1" y1="487.3" x2="409.1" y2="487.3" stroke="#bc8c18" stroke-width="1.8"/>
<line x1="383.2" y1="491.3" x2="397.5" y2="490.5" stroke="#bc8c18" stroke-width="1.8"/>
<line x1="397.9" y1="490.5" x2="408.3" y2="489.8" stroke="#bc8c18" stroke-width="1.8"/>
<line x1="383.3" y1="493.8" x2="394.9" y2="493.1" stroke="#bc8c18" stroke-width="1.8"/>
<line x1="395.4" y1="493.1" x2="409.1" y2="492.2" stroke="#bc8c18" stroke-width="1.8"/>
<line x1="383.5" y1="496.2" x2="397.1" y2="495.4" stroke="#bc8c18" stroke-width="1.8"/>
<line x1="398.5" y1="495.3" x2="409.4" y2="494.7" stroke="#bc8c18" stroke-width="1.8"/>
<line x1="383.1" y1="498.7" x2="394.0" y2="498.0" stroke="#bc8c18" stroke-width="1.8"/>
<line x1="394.6" y1="498.0" x2="408.3" y2="497.2" stroke="#bc8c18" stroke-width="1.8"/>
<line x1="408.9" y1="497.1" x2="409.2" y2="497.1" stroke="#bc8c18" stroke-width="1.8"/>
<line x1="383.2" y1="501.1" x2="400.6" y2="500.1" stroke="#bc8c18" stroke-width="1.8"/>
<line x1="401.2" y1="500.1" x2="409.0" y2="499.6" stroke="#bc8c18" stroke-width="1.8"/>
<line x1="383.6" y1="503.6" x2="391.8" y2="503.1" stroke="#bc8c18" stroke-width="1.8"/>
<line x1="392.6" y1="503.0" x2="402.0" y2="502.5" stroke="#bc8c18" stroke-width="1.8"/>
<line x1="403.0" y1="502.4" x2="409.2" y2="502.0" stroke="#bc8c18" stroke-width="1.8"/>
<line x1="399.1" y1="505.1" x2="408.5" y2="504.5" stroke="#bc8c18" stroke-width="1.8"/>
<line x1="409.6" y1="504.5" x2="409.7" y2="504.4" stroke="#bc8c18" stroke-width="1.8"/>
<line x1="383.7" y1="508.5" x2="399.2" y2="507.5" stroke="#bc8c18" stroke-width="1.8"/>
<line x1="400.7" y1="507.4" x2="409.2" y2="506.9" stroke="#bc8c18" stroke-width="1.8"/>
<line x1="383.4" y1="510.9" x2="400.5" y2="509.9" stroke="#bc8c18" stroke-width="1.8"/>
<line x1="401.4" y1="509.8" x2="409.4" y2="509.4" stroke="#bc8c18" stroke-width="1.8"/>
<line x1="413.1" y1="477.0" x2="430.1" y2="476.0" stroke="#bc8c18" stroke-width="1.7"/>
<line x1="431.1" y1="475.9" x2="434.3" y2="475.7" stroke="#bc8c18" stroke-width="1.7"/>
<line x1="413.1" y1="479.4" x2="425.5" y2="478.7" stroke="#bc8c18" stroke-width="1.7"/>
<line x1="426.3" y1="478.7" x2="434.8" y2="478.1" stroke="#bc8c18" stroke-width="1.7"/>
<line x1="413.2" y1="481.9" x2="425.2" y2="481.2" stroke="#bc8c18" stroke-width="1.7"/>
<line x1="425.6" y1="481.1" x2="434.7" y2="480.6" stroke="#bc8c18" stroke-width="1.7"/>
<line x1="413.9" y1="484.3" x2="429.9" y2="483.3" stroke="#bc8c18" stroke-width="1.7"/>
<line x1="431.1" y1="483.3" x2="434.6" y2="483.1" stroke="#bc8c18" stroke-width="1.7"/>
<line x1="413.8" y1="486.8" x2="427.2" y2="485.9" stroke="#bc8c18" stroke-width="1.7"/>
<line x1="427.5" y1="485.9" x2="434.9" y2="485.5" stroke="#bc8c18" stroke-width="1.7"/>
<line x1="413.1" y1="489.2" x2="429.2" y2="488.3" stroke="#bc8c18" stroke-width="1.7"/>
<line x1="413.9" y1="491.6" x2="426.9" y2="490.9" stroke="#bc8c18" stroke-width="1.7"/>
<line x1="428.4" y1="490.8" x2="434.7" y2="490.4" stroke="#bc8c18" stroke-width="1.7"/>
<line x1="413.9" y1="494.1" x2="423.9" y2="493.5" stroke="#bc8c18" stroke-width="1.7"/>
<line x1="424.6" y1="493.5" x2="434.1" y2="492.9" stroke="#bc8c18" stroke-width="1.7"/>
<line x1="414.0" y1="496.5" x2="428.3" y2="495.7" stroke="#bc8c18" stroke-width="1.7"/>
<line x1="429.7" y1="495.6" x2="434.8" y2="495.3" stroke="#bc8c18" stroke-width="1.7"/>
<line x1="398.6" y1="499.0" x2="411.6" y2="499.3" stroke="#bc8c18" stroke-width="1.4"/>
<line x1="412.0" y1="499.3" x2="423.6" y2="499.5" stroke="#bc8c18" stroke-width="1.4"/>
<line x1="398.5" y1="501.6" x2="410.8" y2="501.9" stroke="#bc8c18" stroke-width="1.4"/>
<line x1="411.9" y1="501.9" x2="425.0" y2="502.1" stroke="#bc8c18" stroke-width="1.4"/>
<line x1="425.5" y1="502.2" x2="433.9" y2="502.3" stroke="#bc8c18" stroke-width="1.4"/>
<line x1="398.6" y1="504.2" x2="405.3" y2="504.3" stroke="#bc8c18" stroke-width="1.4"/>
<line x1="406.1" y1="504.4" x2="416.3" y2="504.6" stroke="#bc8c18" stroke-width="1.4"/>
<line x1="416.7" y1="504.6" x2="427.5" y2="504.8" stroke="#bc8c18" stroke-width="1.4"/>
<line x1="399.5" y1="506.8" x2="407.7" y2="507.0" stroke="#bc8c18" stroke-width="1.4"/>
<line x1="408.3" y1="507.0" x2="421.4" y2="507.3" stroke="#bc8c18" stroke-width="1.4"/>
<line x1="421.8" y1="507.3" x2="431.5" y2="507.5" stroke="#bc8c18" stroke-width="1.4"/>
<line x1="432.2" y1="507.5" x2="435.5" y2="507.6" stroke="#bc8c18" stroke-width="1.4"/>
<path d="M383.8,512.8 L385.7,512.7 L388.3,512.6 L391.3,512.4 L394.7,512.2 L398.2,512.1 L401.8,512.1 L405.2,512.2 L408.3,512.4 L411.2,512.8 L414.1,513.5 L417.0,514.2 L419.8,515.1 L422.5,515.9 L425.2,516.8 L427.7,517.6 L430.0,518.3 L432.1,518.9 L434.1,519.4 L435.8,519.8 L437.5,520.2 L439.1,520.7 L440.7,521.2 L442.4,521.8 L444.1,522.5 L445.9,523.3 L447.7,524.3 L449.5,525.3 L451.4,526.4 L453.2,527.5 L455.0,528.7 L456.7,529.8 L458.3,531.0 L459.9,532.2 L461.5,533.4 L463.0,534.7 L464.5,536.0 L465.9,537.2 L467.2,538.5 L468.5,539.7 L469.6,540.9 L470.6,542.0 L471.5,543.2 L472.3,544.3 L473.0,545.3 L473.7,546.4 L474.3,547.4 L474.8,548.4 L475.3,549.4 L475.7,550.4 L476.1,551.4 L476.4,552.5 L476.7,553.5 L476.9,554.4 L477.1,555.3 L477.3,556.0 L477.4,556.5" fill="none" stroke="#bc8c18" stroke-width="2.5" stroke-linecap="round" stroke-linejoin="round"/>
<path d="M414.0,506.5 L415.2,506.8 L416.9,507.2 L418.9,507.7 L421.1,508.3 L423.4,508.9 L425.8,509.4 L428.0,510.0 L430.0,510.5 L431.8,510.9 L433.6,511.3 L435.2,511.6 L436.9,512.0 L438.6,512.3 L440.3,512.8 L442.1,513.3 L444.1,514.0 L446.2,514.8 L448.5,515.7 L450.9,516.7 L453.3,517.8 L455.7,518.9 L458.1,520.1 L460.4,521.3 L462.5,522.5 L464.5,523.8 L466.5,525.2 L468.4,526.6 L470.2,528.1 L472.0,529.5 L473.6,531.0 L475.2,532.4 L476.7,533.8 L478.1,535.1 L479.3,536.4 L480.5,537.7 L481.6,538.9 L482.6,540.2 L483.5,541.4 L484.4,542.5 L485.2,543.7 L486.0,544.9 L486.7,546.1 L487.3,547.4 L487.8,548.6 L488.3,549.7 L488.7,550.7 L489.1,551.6 L489.4,552.2" fill="none" stroke="#bc8c18" stroke-width="2.5" stroke-linecap="round" stroke-linejoin="round"/>
<path d="M462.5,511.2 L463.6,511.6 L465.1,512.1 L466.8,512.7 L468.7,513.3 L470.8,514.1 L472.8,514.9 L474.8,515.9 L476.7,516.9 L478.5,518.0 L480.3,519.3 L482.1,520.7 L483.9,522.2 L485.7,523.7 L487.5,525.2 L489.2,526.7 L490.8,528.2 L492.4,529.6 L494.0,531.1 L495.5,532.6 L497.0,534.1 L498.4,535.6 L499.8,537.0 L501.0,538.3 L502.1,539.5 L503.1,540.6 L503.9,541.7 L504.7,542.8 L505.3,543.8 L505.9,544.6 L506.3,545.4 L506.8,546.1 L507.1,546.6" fill="none" stroke="#bc8c18" stroke-width="2.5" stroke-linecap="round" stroke-linejoin="round"/>
<path d="M478.8,500.6 L479.6,500.9 L480.8,501.4 L482.1,501.9 L483.6,502.4 L485.1,503.1 L486.6,503.7 L488.1,504.3 L489.4,504.9 L490.6,505.5 L491.9,506.2 L493.1,506.9 L494.3,507.6 L495.4,508.3 L496.4,508.9 L497.3,509.4 L497.9,509.8" fill="none" stroke="#bc8c18" stroke-width="2.1" stroke-linecap="round" stroke-linejoin="round"/>
<path d="M458.3,495.7 L472.4,498.5" fill="none" stroke="#bc8c18" stroke-width="1.2" stroke-linecap="round" stroke-linejoin="round" stroke-dasharray="2 1.5"/>
<polygon points="445.0,480.5 449.0,484.0 453.0,488.0 458.8,493.0 457.0,497.0 455.5,503.0 455.0,509.0 453.6,512.5 451.0,511.0 449.0,505.0 446.0,500.5 441.0,497.5 436.3,494.5 439.0,490.0 442.0,485.0" fill="#bc8c18"/>
<rect x="401.7" y="539.4" width="5.6" height="3" fill="#bc8c18"/>
<rect x="391.3" y="545.8" width="3" height="2.6" fill="#bc8c18"/>
<rect x="383.8" y="541.5" width="3" height="5" fill="#bc8c18"/>
<path d="M325.5,508.5 L337.6,508 L337.6,503.8 L340.6,503.6 L340.6,513.2 L333,514.2 L325.5,513.4 Z" fill="#bc8c18"/>
<path d="M334.5,525.3 L337.7,525.5 L337.5,535 L334,540.4 L331,540.2 L331.5,533 Z" fill="#bc8c18"/>
<rect x="328.3" y="539.2" width="2.6" height="2.6" fill="#8aa0a8"/>
<polygon points="383.0,529.0 383.0,540.4 378.0,538.0 373.6,531.5 378.5,530.2" fill="#bc8c18"/>
<polygon points="493.0,438.0 494.8,438.0 498.5,467.0 505.6,486.5 506.4,499.0 506.8,515.0 507.8,537.7 508.4,551.0 506.2,551.0 504.4,537.7 498.8,515.0 493.6,486.5 494.6,467.0" fill="#bc8c18"/>
<path d="M517.5,522.0 L521.5,538.0 L523.4,549.0" fill="none" stroke="#bc8c18" stroke-width="1.6" stroke-linecap="round" stroke-linejoin="round"/>
<rect x="280.2" y="515.7" width="1.6" height="1.6" fill="#6aa890" opacity="0.85"/>
<rect x="281.2" y="517.7" width="1.6" height="1.6" fill="#6aa890" opacity="0.85"/>
<rect x="282.4" y="519.7" width="1.6" height="1.6" fill="#6aa890" opacity="0.85"/>
<rect x="283.0" y="522.2" width="1.6" height="1.6" fill="#6aa890" opacity="0.85"/>
<rect x="281.8" y="524.7" width="1.6" height="1.6" fill="#6aa890" opacity="0.85"/>
<polygon points="354.0,542.0 357.1,542.0 362.1,555.2 362.3,575.3 359.6,575.3 353.3,559.0" fill="#84b070" opacity="0.95"/>
</g>
<defs><linearGradient id="wg" gradientUnits="userSpaceOnUse" x1="505" y1="0" x2="522" y2="0"><stop offset="0" stop-color="#a0c454"/><stop offset="0.3" stop-color="#48bc98"/><stop offset="0.6" stop-color="#38a8c8"/><stop offset="1" stop-color="#8478d0"/></linearGradient></defs>
<polygon points="505.6,498.8 510.5,507.0 515.0,516.0 518.5,527.0 520.8,537.7 523.0,549.5 508.4,551.0 507.8,537.7 506.8,515.0" fill="url(#wg)" opacity="0.92"/>
<rect x="518.4" y="546.9" width="2.0" height="2.0" fill="#1cb4c8"/>
<rect x="519.8" y="547.0" width="2.0" height="2.0" fill="#1cb4c8"/>
<rect x="520.5" y="547.1" width="2.0" height="2.0" fill="#1cb4c8"/>
<rect x="521.5" y="546.7" width="2.0" height="2.0" fill="#1cb4c8"/>
<rect x="513.7" y="547.1" width="2.0" height="2.0" fill="#1cb4c8"/>
<rect x="516.6" y="548.6" width="2.0" height="2.0" fill="#1cb2cc"/>
<rect x="520.0" y="548.1" width="2.0" height="2.0" fill="#1cb2cc"/>
<rect x="514.4" y="548.4" width="2.0" height="2.0" fill="#1cb2cc"/>
<rect x="512.6" y="548.4" width="2.0" height="2.0" fill="#1cb2cc"/>
<rect x="517.9" y="548.6" width="2.0" height="2.0" fill="#1cb2cc"/>
<rect x="514.0" y="549.3" width="2.0" height="2.0" fill="#1cb0d0"/>
<rect x="516.7" y="549.7" width="2.0" height="2.0" fill="#1cb0d0"/>
<rect x="520.2" y="549.4" width="2.0" height="2.0" fill="#1cb0d0"/>
<rect x="517.8" y="549.9" width="2.0" height="2.0" fill="#1cb0d0"/>
<rect x="514.1" y="550.9" width="2.0" height="2.0" fill="#1daed4"/>
<rect x="515.8" y="551.1" width="2.0" height="2.0" fill="#1daed4"/>
<rect x="515.3" y="551.1" width="2.0" height="2.0" fill="#1daed4"/>
<rect x="520.6" y="550.8" width="2.0" height="2.0" fill="#1daed4"/>
<rect x="514.3" y="551.2" width="2.0" height="2.0" fill="#1daed4"/>
<rect x="520.4" y="552.0" width="2.0" height="2.0" fill="#1eacd8"/>
<rect x="516.4" y="552.2" width="2.0" height="2.0" fill="#1eacd8"/>
<rect x="517.6" y="552.6" width="2.0" height="2.0" fill="#1eacd8"/>
<rect x="517.5" y="553.9" width="2.0" height="2.0" fill="#1eaadc"/>
<rect x="515.5" y="554.1" width="2.0" height="2.0" fill="#1eaadc"/>
<rect x="516.9" y="553.6" width="2.0" height="2.0" fill="#1eaadc"/>
<rect x="514.0" y="553.4" width="2.0" height="2.0" fill="#1eaadc"/>
<rect x="520.2" y="554.9" width="2.0" height="2.0" fill="#20a7de"/>
<rect x="518.5" y="554.9" width="2.0" height="2.0" fill="#20a7de"/>
<rect x="522.0" y="555.0" width="2.0" height="2.0" fill="#20a7de"/>
<rect x="522.4" y="555.2" width="2.0" height="2.0" fill="#20a7de"/>
<rect x="517.2" y="555.2" width="2.0" height="2.0" fill="#20a7de"/>
<rect x="516.8" y="556.6" width="2.0" height="2.0" fill="#21a4e1"/>
<rect x="521.7" y="556.4" width="2.0" height="2.0" fill="#21a4e1"/>
<rect x="521.3" y="556.4" width="2.0" height="2.0" fill="#21a4e1"/>
<rect x="515.9" y="557.7" width="2.0" height="2.0" fill="#22a1e3"/>
<rect x="518.8" y="557.5" width="2.0" height="2.0" fill="#22a1e3"/>
<rect x="515.9" y="557.8" width="2.0" height="2.0" fill="#22a1e3"/>
<rect x="517.9" y="558.2" width="2.0" height="2.0" fill="#22a1e3"/>
<rect x="521.7" y="558.9" width="2.0" height="2.0" fill="#249ee5"/>
<rect x="514.9" y="559.3" width="2.0" height="2.0" fill="#249ee5"/>
<rect x="516.6" y="558.8" width="2.0" height="2.0" fill="#249ee5"/>
<rect x="516.5" y="559.1" width="2.0" height="2.0" fill="#249ee5"/>
<rect x="516.8" y="560.4" width="2.0" height="2.0" fill="#269be8"/>
<rect x="522.5" y="560.4" width="2.0" height="2.0" fill="#269be8"/>
<rect x="520.6" y="560.8" width="2.0" height="2.0" fill="#269be8"/>
<rect x="517.4" y="561.8" width="2.0" height="2.0" fill="#2798ea"/>
<rect x="522.1" y="561.7" width="2.0" height="2.0" fill="#2798ea"/>
<rect x="519.1" y="561.5" width="2.0" height="2.0" fill="#2798ea"/>
<rect x="516.7" y="561.5" width="2.0" height="2.0" fill="#2798ea"/>
<rect x="519.9" y="562.8" width="2.0" height="2.0" fill="#2895ec"/>
<rect x="518.5" y="563.2" width="2.0" height="2.0" fill="#2895ec"/>
<rect x="520.8" y="563.0" width="2.0" height="2.0" fill="#2895ec"/>
<rect x="520.5" y="562.9" width="2.0" height="2.0" fill="#2895ec"/>
<rect x="517.5" y="564.7" width="2.0" height="2.0" fill="#2a92ee"/>
<rect x="518.4" y="564.8" width="2.0" height="2.0" fill="#2a92ee"/>
<rect x="517.6" y="564.4" width="2.0" height="2.0" fill="#2a92ee"/>
<rect x="515.6" y="564.2" width="2.0" height="2.0" fill="#2a92ee"/>
<rect x="520.0" y="566.1" width="2.0" height="2.0" fill="#2b8ff1"/>
<rect x="520.8" y="566.2" width="2.0" height="2.0" fill="#2b8ff1"/>
<rect x="520.9" y="566.0" width="2.0" height="2.0" fill="#2b8ff1"/>
<rect x="520.7" y="566.9" width="2.0" height="2.0" fill="#2d8cf3"/>
<rect x="518.8" y="566.9" width="2.0" height="2.0" fill="#2d8cf3"/>
<rect x="518.5" y="568.6" width="2.0" height="2.0" fill="#2f88f4"/>
<rect x="517.2" y="568.5" width="2.0" height="2.0" fill="#2f88f4"/>
<rect x="517.3" y="568.7" width="2.0" height="2.0" fill="#2f88f4"/>
<rect x="516.7" y="568.5" width="2.0" height="2.0" fill="#2f88f4"/>
<rect x="517.4" y="570.0" width="2.0" height="2.0" fill="#3185f5"/>
<rect x="520.4" y="570.1" width="2.0" height="2.0" fill="#3185f5"/>
<rect x="519.2" y="569.8" width="2.0" height="2.0" fill="#3185f5"/>
<rect x="519.3" y="569.6" width="2.0" height="2.0" fill="#3185f5"/>
<rect x="520.8" y="571.3" width="2.0" height="2.0" fill="#3382f6"/>
<rect x="518.3" y="570.9" width="2.0" height="2.0" fill="#3382f6"/>
<rect x="523.0" y="571.4" width="2.0" height="2.0" fill="#3382f6"/>
<rect x="521.4" y="571.0" width="2.0" height="2.0" fill="#3382f6"/>
<rect x="521.1" y="573.0" width="2.0" height="2.0" fill="#357ef7"/>
<rect x="520.9" y="573.0" width="2.0" height="2.0" fill="#357ef7"/>
<rect x="521.2" y="572.7" width="2.0" height="2.0" fill="#357ef7"/>
<rect x="519.9" y="573.8" width="2.0" height="2.0" fill="#377af8"/>
<rect x="523.2" y="573.9" width="2.0" height="2.0" fill="#377af8"/>
<rect x="518.3" y="574.0" width="2.0" height="2.0" fill="#377af8"/>
<rect x="519.7" y="574.4" width="2.0" height="2.0" fill="#377af8"/>
<rect x="518.7" y="573.8" width="2.0" height="2.0" fill="#377af8"/>
<rect x="519.1" y="575.0" width="2.0" height="2.0" fill="#3977f9"/>
<rect x="520.0" y="575.2" width="2.0" height="2.0" fill="#3977f9"/>
<rect x="521.5" y="575.5" width="2.0" height="2.0" fill="#3977f9"/>
<rect x="521.1" y="577.1" width="2.0" height="2.0" fill="#3b73fa"/>
<rect x="519.9" y="577.2" width="2.0" height="2.0" fill="#3b73fa"/>
<rect x="522.1" y="578.5" width="2.0" height="2.0" fill="#3d6ffb"/>
<rect x="523.5" y="578.6" width="2.0" height="2.0" fill="#3d6ffb"/>
<rect x="521.6" y="578.3" width="2.0" height="2.0" fill="#3d6ffb"/>
<rect x="520.3" y="579.6" width="2.0" height="2.0" fill="#406cfc"/>
<rect x="521.2" y="579.5" width="2.0" height="2.0" fill="#406cfc"/>
<rect x="520.0" y="579.5" width="2.0" height="2.0" fill="#406cfc"/>
<rect x="519.1" y="580.8" width="2.0" height="2.0" fill="#4168fc"/>
<rect x="519.0" y="581.4" width="2.0" height="2.0" fill="#4168fc"/>
<rect x="521.0" y="582.8" width="2.0" height="2.0" fill="#4264f8"/>
<rect x="519.5" y="582.9" width="2.0" height="2.0" fill="#4264f8"/>
<rect x="520.1" y="584.1" width="2.0" height="2.0" fill="#4260f5"/>
<rect x="521.0" y="585.7" width="2.0" height="2.0" fill="#435cf1"/>
<rect x="522.6" y="585.4" width="2.0" height="2.0" fill="#435cf1"/>
<rect x="522.9" y="587.2" width="2.0" height="2.0" fill="#4358ee"/>
<rect x="521.4" y="588.5" width="2.0" height="2.0" fill="#4454ea"/>
<rect x="523.3" y="588.6" width="2.0" height="2.0" fill="#4454ea"/>
<rect x="521.3" y="589.9" width="2.0" height="2.0" fill="#4450e7"/>
<rect x="520.4" y="589.4" width="2.0" height="2.0" fill="#4450e7"/>
<rect x="524.0" y="591.6" width="2.0" height="2.0" fill="#454ce3"/>
<rect x="522.8" y="591.2" width="2.0" height="2.0" fill="#454ce3"/>
<rect x="521.7" y="593.0" width="2.0" height="2.0" fill="#4548e0"/>
<rect x="523.2" y="593.8" width="2.0" height="2.0" fill="#4643dc"/>
<rect x="521.3" y="594.3" width="2.0" height="2.0" fill="#4643dc"/>
<rect x="521.7" y="595.2" width="2.0" height="2.0" fill="#4540d7"/>
<rect x="522.4" y="596.9" width="2.0" height="2.0" fill="#443dd2"/>
<rect x="523.7" y="597.3" width="2.0" height="2.0" fill="#443dd2"/>
<rect x="522.3" y="597.2" width="1.8" height="1.8" fill="#443dd2"/>
<rect x="523.7" y="604.1" width="1.8" height="1.8" fill="#4235c4"/>
<rect x="522.8" y="608.5" width="1.8" height="1.8" fill="#4130ba"/>
<rect x="523.9" y="613.1" width="1.8" height="1.8" fill="#3f2bb1"/>
<rect x="523.1" y="615.8" width="1.8" height="1.8" fill="#3f29ad"/>
<rect x="524.6" y="617.9" width="1.8" height="1.8" fill="#3e26a8"/>
<rect x="487.3" y="439.0" width="1.8" height="1.8" fill="#50b8a8"/>
<rect x="486.3" y="440.1" width="1.8" height="1.8" fill="#50b8a8"/>
<rect x="487.1" y="441.4" width="1.8" height="1.8" fill="#50b8a8"/>
<rect x="487.7" y="443.5" width="1.8" height="1.8" fill="#50b8a8"/>
<rect x="488.9" y="444.4" width="1.8" height="1.8" fill="#50b8a8"/>
<rect x="488.9" y="445.7" width="1.8" height="1.8" fill="#50b8a8"/>
<rect x="488.3" y="447.2" width="1.8" height="1.8" fill="#50b8a8"/>
<rect x="487.7" y="448.8" width="1.8" height="1.8" fill="#50b8a8"/>
<rect x="489.9" y="449.7" width="1.8" height="1.8" fill="#50b8a8"/>
<rect x="489.3" y="450.8" width="1.8" height="1.8" fill="#50b8a8"/>
<rect x="487.6" y="450.8" width="1.8" height="1.8" fill="#6c8cc8"/>
<rect x="488.3" y="452.6" width="1.8" height="1.8" fill="#6c8cc8"/>
<rect x="488.8" y="453.3" width="1.8" height="1.8" fill="#6c8cc8"/>
<rect x="490.3" y="454.7" width="1.8" height="1.8" fill="#6c8cc8"/>
<rect x="489.9" y="456.6" width="1.8" height="1.8" fill="#6c8cc8"/>
<rect x="488.7" y="457.9" width="1.8" height="1.8" fill="#6c8cc8"/>
<rect x="490.0" y="459.4" width="1.8" height="1.8" fill="#6c8cc8"/>
<rect x="490.7" y="460.2" width="1.8" height="1.8" fill="#6c8cc8"/>
<rect x="488.5" y="462.0" width="1.8" height="1.8" fill="#6c8cc8"/>
<rect x="489.7" y="462.7" width="1.8" height="1.8" fill="#6c8cc8"/>
<rect x="489.1" y="464.4" width="1.8" height="1.8" fill="#6c8cc8"/>
<rect x="489.1" y="465.7" width="1.8" height="1.8" fill="#6c8cc8"/>
<rect x="488.9" y="467.2" width="1.8" height="1.8" fill="#6c8cc8"/>
<rect x="488.4" y="468.1" width="1.8" height="1.8" fill="#6c8cc8"/>
<rect x="488.9" y="469.7" width="1.8" height="1.8" fill="#6c8cc8"/>
<rect x="490.6" y="470.6" width="1.8" height="1.8" fill="#6c8cc8"/>
<rect x="488.8" y="472.0" width="1.8" height="1.8" fill="#6c8cc8"/>
<rect x="488.4" y="473.5" width="1.8" height="1.8" fill="#6c8cc8"/>
<rect x="489.6" y="474.8" width="1.8" height="1.8" fill="#6c8cc8"/>
<path d="M487.1,406.3 L487.8,410.7 L488.4,413.8 L489.0,417.8 L489.6,420.6 L490.2,425.3 L490.8,428.6" fill="none" stroke="#e8b428" stroke-width="2.8" stroke-linecap="round" stroke-linejoin="round"/>
<line x1="388.6" y1="565.9" x2="406.2" y2="564.2" stroke="#b3c53e" stroke-width="1.8" stroke-opacity="0.92"/>
<line x1="407.3" y1="564.1" x2="416.6" y2="563.1" stroke="#b3c53e" stroke-width="1.8" stroke-opacity="0.92"/>
<line x1="389.4" y1="569.1" x2="406.4" y2="567.4" stroke="#8ec954" stroke-width="1.8" stroke-opacity="0.92"/>
<line x1="407.8" y1="567.3" x2="417.5" y2="566.3" stroke="#8ec954" stroke-width="1.8" stroke-opacity="0.92"/>
<line x1="389.0" y1="572.4" x2="412.8" y2="570.0" stroke="#66ca75" stroke-width="1.8" stroke-opacity="0.92"/>
<line x1="414.2" y1="569.9" x2="417.7" y2="569.6" stroke="#66ca75" stroke-width="1.8" stroke-opacity="0.92"/>
<line x1="388.2" y1="575.8" x2="413.2" y2="573.3" stroke="#44c891" stroke-width="1.8" stroke-opacity="0.92"/>
<line x1="414.3" y1="573.1" x2="416.7" y2="572.9" stroke="#44c891" stroke-width="1.8" stroke-opacity="0.92"/>
<line x1="388.9" y1="578.9" x2="411.1" y2="576.7" stroke="#2ac2a6" stroke-width="1.8" stroke-opacity="0.92"/>
<line x1="412.2" y1="576.6" x2="417.1" y2="576.1" stroke="#2ac2a6" stroke-width="1.8" stroke-opacity="0.92"/>
<line x1="389.4" y1="582.2" x2="410.9" y2="580.0" stroke="#1abbba" stroke-width="1.8" stroke-opacity="0.92"/>
<line x1="412.1" y1="579.9" x2="417.8" y2="579.3" stroke="#1abbba" stroke-width="1.8" stroke-opacity="0.92"/>
<line x1="388.6" y1="585.5" x2="404.6" y2="583.9" stroke="#1cb1cd" stroke-width="1.8" stroke-opacity="0.92"/>
<line x1="405.5" y1="583.8" x2="416.7" y2="582.7" stroke="#1cb1cd" stroke-width="1.8" stroke-opacity="0.92"/>
<line x1="389.4" y1="588.7" x2="416.2" y2="586.0" stroke="#20a7de" stroke-width="1.8" stroke-opacity="0.92"/>
<line x1="388.1" y1="592.1" x2="413.5" y2="589.5" stroke="#2799e9" stroke-width="1.8" stroke-opacity="0.92"/>
<line x1="414.8" y1="589.4" x2="416.7" y2="589.2" stroke="#2799e9" stroke-width="1.8" stroke-opacity="0.92"/>
<line x1="419.3" y1="555.5" x2="439.6" y2="553.4" stroke="#b3c53e" stroke-width="1.8" stroke-opacity="0.92"/>
<line x1="440.6" y1="553.3" x2="445.1" y2="552.9" stroke="#b3c53e" stroke-width="1.8" stroke-opacity="0.92"/>
<line x1="420.2" y1="558.6" x2="442.5" y2="556.4" stroke="#92c950" stroke-width="1.8" stroke-opacity="0.92"/>
<line x1="443.9" y1="556.3" x2="444.2" y2="556.2" stroke="#92c950" stroke-width="1.8" stroke-opacity="0.92"/>
<line x1="419.2" y1="562.0" x2="434.7" y2="560.5" stroke="#6eca6e" stroke-width="1.8" stroke-opacity="0.92"/>
<line x1="436.0" y1="560.3" x2="445.4" y2="559.4" stroke="#6eca6e" stroke-width="1.8" stroke-opacity="0.92"/>
<line x1="420.3" y1="565.2" x2="444.6" y2="562.7" stroke="#4cca8a" stroke-width="1.8" stroke-opacity="0.92"/>
<line x1="419.3" y1="568.5" x2="443.3" y2="566.1" stroke="#35c59d" stroke-width="1.8" stroke-opacity="0.92"/>
<line x1="443.9" y1="566.1" x2="444.6" y2="566.0" stroke="#35c59d" stroke-width="1.8" stroke-opacity="0.92"/>
<line x1="419.5" y1="571.7" x2="439.6" y2="569.7" stroke="#1ebfb0" stroke-width="1.8" stroke-opacity="0.92"/>
<line x1="440.6" y1="569.6" x2="445.0" y2="569.2" stroke="#1ebfb0" stroke-width="1.8" stroke-opacity="0.92"/>
<line x1="420.0" y1="575.0" x2="432.1" y2="573.7" stroke="#1bb7c1" stroke-width="1.8" stroke-opacity="0.92"/>
<line x1="433.5" y1="573.6" x2="444.8" y2="572.5" stroke="#1bb7c1" stroke-width="1.8" stroke-opacity="0.92"/>
<line x1="420.5" y1="578.2" x2="442.3" y2="576.0" stroke="#1dafd2" stroke-width="1.8" stroke-opacity="0.92"/>
<line x1="442.9" y1="575.9" x2="444.5" y2="575.8" stroke="#1dafd2" stroke-width="1.8" stroke-opacity="0.92"/>
<line x1="419.6" y1="581.5" x2="436.2" y2="579.9" stroke="#21a5e0" stroke-width="1.8" stroke-opacity="0.92"/>
<line x1="437.1" y1="579.8" x2="444.3" y2="579.1" stroke="#21a5e0" stroke-width="1.8" stroke-opacity="0.92"/>
<line x1="419.4" y1="584.8" x2="433.9" y2="583.3" stroke="#2798ea" stroke-width="1.8" stroke-opacity="0.92"/>
<line x1="434.6" y1="583.3" x2="444.6" y2="582.3" stroke="#2798ea" stroke-width="1.8" stroke-opacity="0.92"/>
<rect x="419.0" y="555.6" width="1.8" height="1.8" fill="#57cb81"/>
<rect x="416.7" y="556.8" width="1.8" height="1.8" fill="#4eca89"/>
<rect x="418.1" y="558.7" width="1.8" height="1.8" fill="#47c98e"/>
<rect x="419.1" y="559.8" width="1.8" height="1.8" fill="#41c794"/>
<rect x="418.1" y="560.8" width="1.8" height="1.8" fill="#3ac699"/>
<rect x="418.3" y="563.8" width="1.8" height="1.8" fill="#2dc3a4"/>
<rect x="419.0" y="567.8" width="1.8" height="1.8" fill="#19beb4"/>
<rect x="418.5" y="570.8" width="1.8" height="1.8" fill="#1ab9be"/>
<rect x="419.6" y="572.2" width="1.8" height="1.8" fill="#1bb7c2"/>
<rect x="419.7" y="576.5" width="1.8" height="1.8" fill="#1db0d1"/>
<rect x="419.2" y="577.8" width="1.8" height="1.8" fill="#1dadd6"/>
<rect x="419.8" y="579.7" width="1.8" height="1.8" fill="#1eabda"/>
<rect x="420.8" y="583.6" width="1.8" height="1.8" fill="#23a0e3"/>
<rect x="421.4" y="584.6" width="1.8" height="1.8" fill="#259de6"/>
<rect x="419.4" y="586.4" width="1.8" height="1.8" fill="#2699e9"/>
<rect x="421.5" y="587.5" width="1.8" height="1.8" fill="#2896ec"/>
<rect x="418.6" y="589.0" width="1.8" height="1.8" fill="#2a92ee"/>
<rect x="418.5" y="590.2" width="1.8" height="1.8" fill="#2c8ef1"/>
<rect x="420.5" y="592.1" width="1.8" height="1.8" fill="#2e8bf3"/>
<rect x="421.2" y="593.5" width="1.8" height="1.8" fill="#3086f5"/>
<rect x="418.8" y="594.7" width="1.8" height="1.8" fill="#3382f6"/>
<rect x="421.5" y="596.5" width="1.8" height="1.8" fill="#357ef7"/>
<rect x="419.9" y="598.9" width="1.8" height="1.8" fill="#3a76f9"/>
<rect x="419.1" y="600.5" width="1.8" height="1.8" fill="#3c71fb"/>
<rect x="420.6" y="601.4" width="1.8" height="1.8" fill="#3f6dfc"/>
<rect x="419.3" y="602.8" width="1.8" height="1.8" fill="#4169fd"/>
<line x1="412.1" y1="596.0" x2="422.2" y2="595.0" stroke="#3d70fb" stroke-width="1.7"/>
<line x1="392.2" y1="601.3" x2="398.6" y2="600.6" stroke="#4260f5" stroke-width="1.7"/>
<line x1="399.5" y1="600.5" x2="408.2" y2="599.7" stroke="#4260f5" stroke-width="1.7"/>
<line x1="409.5" y1="599.5" x2="422.3" y2="598.3" stroke="#4260f5" stroke-width="1.7"/>
<line x1="392.3" y1="604.6" x2="403.9" y2="603.4" stroke="#444fe7" stroke-width="1.7"/>
<line x1="414.6" y1="602.3" x2="422.3" y2="601.6" stroke="#444fe7" stroke-width="1.7"/>
<line x1="403.1" y1="606.8" x2="409.1" y2="606.2" stroke="#4540d6" stroke-width="1.7"/>
<line x1="409.8" y1="606.1" x2="419.2" y2="605.2" stroke="#4540d6" stroke-width="1.7"/>
<line x1="420.5" y1="605.0" x2="423.9" y2="604.7" stroke="#4540d6" stroke-width="1.7"/>
<line x1="393.8" y1="611.0" x2="401.5" y2="610.2" stroke="#4233bf" stroke-width="1.7"/>
<line x1="402.1" y1="610.2" x2="410.4" y2="609.4" stroke="#4233bf" stroke-width="1.7"/>
<line x1="411.3" y1="609.3" x2="419.5" y2="608.4" stroke="#4233bf" stroke-width="1.7"/>
<line x1="420.4" y1="608.4" x2="423.2" y2="608.1" stroke="#4233bf" stroke-width="1.7"/>
<line x1="421.1" y1="585.9" x2="430.3" y2="585.0" stroke="#3977f9" stroke-width="1.8"/>
<line x1="430.7" y1="584.9" x2="439.6" y2="584.0" stroke="#3977f9" stroke-width="1.8"/>
<line x1="440.5" y1="583.9" x2="444.9" y2="583.5" stroke="#3977f9" stroke-width="1.8"/>
<line x1="434.8" y1="587.8" x2="445.2" y2="586.8" stroke="#4165fa" stroke-width="1.8"/>
<line x1="420.7" y1="592.5" x2="431.6" y2="591.4" stroke="#4453ea" stroke-width="1.8"/>
<line x1="432.3" y1="591.4" x2="442.3" y2="590.4" stroke="#4453ea" stroke-width="1.8"/>
<line x1="420.5" y1="595.8" x2="429.9" y2="594.9" stroke="#4541d8" stroke-width="1.8"/>
<line x1="430.7" y1="594.8" x2="439.0" y2="594.0" stroke="#4541d8" stroke-width="1.8"/>
<line x1="439.4" y1="594.0" x2="444.4" y2="593.5" stroke="#4541d8" stroke-width="1.8"/>
<rect x="446.2" y="561.2" width="2.6" height="2.6" fill="#8c8cc0"/>
<rect x="448.9" y="568.9" width="2.2" height="2.2" fill="#8c8cc0"/>
<line x1="460.9" y1="558.4" x2="513.5" y2="549.6" stroke="#c1c23b" stroke-width="1.9"/>
<line x1="513.8" y1="549.6" x2="523.8" y2="547.9" stroke="#c1c23b" stroke-width="1.9"/>
<line x1="461.2" y1="562.6" x2="508.6" y2="554.7" stroke="#88c959" stroke-width="1.9"/>
<line x1="510.0" y1="554.4" x2="523.6" y2="552.1" stroke="#88c959" stroke-width="1.9"/>
<line x1="461.5" y1="566.7" x2="510.3" y2="558.6" stroke="#4bca8b" stroke-width="1.9"/>
<line x1="511.7" y1="558.3" x2="524.4" y2="556.2" stroke="#4bca8b" stroke-width="1.9"/>
<line x1="461.5" y1="570.9" x2="502.2" y2="564.1" stroke="#23c0ac" stroke-width="1.9"/>
<line x1="502.6" y1="564.0" x2="524.4" y2="560.4" stroke="#23c0ac" stroke-width="1.9"/>
<line x1="460.6" y1="575.3" x2="508.9" y2="567.2" stroke="#1cb3cb" stroke-width="1.9"/>
<line x1="509.3" y1="567.1" x2="523.7" y2="564.7" stroke="#1cb3cb" stroke-width="1.9"/>
<line x1="461.2" y1="579.4" x2="493.6" y2="574.0" stroke="#23a1e3" stroke-width="1.9"/>
<line x1="494.6" y1="573.8" x2="523.6" y2="568.9" stroke="#23a1e3" stroke-width="1.9"/>
<line x1="500.9" y1="575.8" x2="510.4" y2="574.3" stroke="#2d8cf3" stroke-width="1.7"/>
<line x1="511.5" y1="574.1" x2="524.9" y2="571.8" stroke="#2d8cf3" stroke-width="1.7"/>
<line x1="500.8" y1="580.5" x2="507.6" y2="579.3" stroke="#367cf8" stroke-width="1.7"/>
<line x1="508.1" y1="579.2" x2="518.8" y2="577.5" stroke="#367cf8" stroke-width="1.7"/>
<line x1="519.5" y1="577.3" x2="523.4" y2="576.7" stroke="#367cf8" stroke-width="1.7"/>
<line x1="461.0" y1="583.4" x2="466.9" y2="583.2" stroke="#2d8cf3" stroke-width="1.6"/>
<line x1="475.0" y1="582.7" x2="479.7" y2="582.5" stroke="#2d8cf3" stroke-width="1.6"/>
<line x1="480.3" y1="582.5" x2="484.6" y2="582.3" stroke="#2d8cf3" stroke-width="1.6"/>
<line x1="460.8" y1="587.1" x2="465.9" y2="586.8" stroke="#3382f6" stroke-width="1.6"/>
<line x1="466.9" y1="586.8" x2="474.8" y2="586.4" stroke="#3382f6" stroke-width="1.6"/>
<line x1="460.1" y1="590.7" x2="465.9" y2="590.4" stroke="#3978f9" stroke-width="1.6"/>
<line x1="466.6" y1="590.4" x2="470.4" y2="590.2" stroke="#3978f9" stroke-width="1.6"/>
<line x1="460.9" y1="594.0" x2="481.8" y2="593.3" stroke="#4169fd" stroke-width="1.9"/>
<line x1="482.5" y1="593.3" x2="484.6" y2="593.3" stroke="#4169fd" stroke-width="1.9"/>
<line x1="461.4" y1="597.9" x2="473.1" y2="597.5" stroke="#4454eb" stroke-width="1.9"/>
<line x1="473.4" y1="597.5" x2="484.9" y2="597.2" stroke="#4454eb" stroke-width="1.9"/>
<line x1="460.2" y1="601.9" x2="475.0" y2="601.4" stroke="#4540d6" stroke-width="1.9"/>
<line x1="475.6" y1="601.4" x2="486.1" y2="601.1" stroke="#4540d6" stroke-width="1.9"/>
<line x1="460.0" y1="605.8" x2="480.0" y2="605.2" stroke="#412fb9" stroke-width="1.9"/>
<line x1="480.9" y1="605.2" x2="484.7" y2="605.1" stroke="#412fb9" stroke-width="1.9"/>
<line x1="510.8" y1="588.6" x2="516.0" y2="588.4" stroke="#3d70fb" stroke-width="1.5"/>
<line x1="513.7" y1="598.5" x2="517.4" y2="598.3" stroke="#454be3" stroke-width="1.5"/>
<rect x="457.6" y="583.1" width="1.8" height="1.8" fill="#377af8"/>
<rect x="456.6" y="587.1" width="1.8" height="1.8" fill="#377af8"/>
<rect x="458.1" y="591.1" width="1.8" height="1.8" fill="#377af8"/>
<rect x="550.7" y="574.7" width="1.8" height="1.8" fill="#4169fd"/>
<rect x="552.9" y="579.3" width="1.8" height="1.8" fill="#435cf2"/>
<rect x="551.5" y="581.3" width="1.8" height="1.8" fill="#4455ec"/>
<rect x="552.8" y="583.3" width="1.8" height="1.8" fill="#444fe6"/>
<rect x="552.3" y="585.8" width="1.8" height="1.8" fill="#4548e1"/>
<rect x="553.3" y="587.5" width="1.8" height="1.8" fill="#4642db"/>
<rect x="553.7" y="590.5" width="1.8" height="1.8" fill="#443dd2"/>
<rect x="562.5" y="577.5" width="2.0" height="2.0" fill="#4169fd"/>
<rect x="565.1" y="578.1" width="1.8" height="1.8" fill="#4169fd"/>
<path d="M583.3,530.8 L589.6,525.0" fill="none" stroke="#f6f210" stroke-width="2.0" stroke-linecap="round" stroke-linejoin="round"/>
<path d="M584.8,538.6 L590.4,536.6 L596.0,535.3 L602.0,532.6 L608.0,533.2" fill="none" stroke="#f6f210" stroke-width="1.7" stroke-linecap="round" stroke-linejoin="round"/>
<path d="M584.8,543.2 L589.9,542.2 L595.0,541.0 L603.5,538.8" fill="none" stroke="#f0c83c" stroke-width="1.6" stroke-linecap="round" stroke-linejoin="round"/>
<rect x="606.6" y="538.7" width="1.8" height="1.8" fill="#f0c83c"/>
<rect x="576.0" y="545.6" width="5.0" height="1.7" fill="#83c95d"/>
<rect x="580.0" y="547.6" width="8.0" height="1.7" fill="#a5c841"/>
<rect x="577.0" y="550.1" width="6.0" height="1.7" fill="#50cb87"/>
<rect x="579.0" y="552.6" width="5.0" height="1.7" fill="#3ac699"/>
<rect x="583.0" y="548.1" width="7.0" height="1.7" fill="#94c94f"/>
<rect x="586.0" y="551.6" width="6.0" height="1.7" fill="#50cb87"/>
<rect x="578.5" y="555.1" width="4.0" height="1.7" fill="#24c1ab"/>
<rect x="588.0" y="555.6" width="5.0" height="1.7" fill="#24c1ab"/>
<rect x="590.0" y="558.1" width="4.0" height="1.7" fill="#19beb4"/>
<path d="M585.0,557.9 L594.0,556.7" fill="none" stroke="#19beb4" stroke-width="1.7" stroke-linecap="round" stroke-linejoin="round"/>
<path d="M585.0,563.8 L592.0,563.4 L599.0,562.7" fill="none" stroke="#1bb6c4" stroke-width="1.7" stroke-linecap="round" stroke-linejoin="round"/>
<path d="M585.0,569.8 L591.0,568.9 L597.0,569.1 L603.0,569.0 L609.0,568.7" fill="none" stroke="#1daed4" stroke-width="1.7" stroke-linecap="round" stroke-linejoin="round"/>
<path d="M585.0,576.1 L590.4,575.9 L595.8,575.7 L601.1,575.7 L606.5,575.2" fill="none" stroke="#2895ec" stroke-width="1.7" stroke-linecap="round" stroke-linejoin="round"/>
<path d="M585.0,583.2 L590.8,583.3 L596.5,583.5 L602.2,582.5 L608.0,582.7" fill="none" stroke="#357ef7" stroke-width="1.7" stroke-linecap="round" stroke-linejoin="round"/>
<path d="M585.0,589.7 L591.2,589.9 L597.5,589.2" fill="none" stroke="#4169fd" stroke-width="1.7" stroke-linecap="round" stroke-linejoin="round"/>
<path d="M580.0,595.9 L588.0,594.7" fill="none" stroke="#443dd2" stroke-width="1.7" stroke-linecap="round" stroke-linejoin="round"/>
<rect x="597.1" y="572.1" width="1.8" height="1.8" fill="#21a4e1"/>
<rect x="586.2" y="443.8" width="2.0" height="2.0" fill="#f9fb14"/>
<rect x="587.5" y="444.8" width="2.0" height="2.0" fill="#f9f716"/>
<rect x="588.3" y="445.5" width="2.0" height="2.0" fill="#faf319"/>
<rect x="588.3" y="447.5" width="2.0" height="2.0" fill="#faef1b"/>
<rect x="587.3" y="448.2" width="2.0" height="2.0" fill="#faeb1e"/>
<rect x="586.3" y="449.8" width="2.0" height="2.0" fill="#fbe620"/>
<rect x="587.8" y="450.8" width="2.0" height="2.0" fill="#fbe223"/>
<rect x="588.1" y="452.0" width="2.0" height="2.0" fill="#fbde25"/>
<rect x="588.7" y="453.0" width="2.0" height="2.0" fill="#fcda27"/>
<rect x="587.0" y="454.4" width="2.0" height="2.0" fill="#fcd62a"/>
<rect x="587.3" y="455.5" width="2.0" height="2.0" fill="#fcd22c"/>
<rect x="587.1" y="456.9" width="2.0" height="2.0" fill="#fdce2f"/>
<rect x="588.9" y="457.9" width="2.0" height="2.0" fill="#fdca31"/>
<rect x="587.3" y="459.2" width="2.0" height="2.0" fill="#f6c232"/>
<rect x="588.4" y="460.8" width="2.0" height="2.0" fill="#f6c232"/>
<rect x="586.8" y="462.0" width="2.0" height="2.0" fill="#f6c232"/>
<rect x="587.2" y="462.9" width="2.0" height="2.0" fill="#f6c232"/>
<rect x="587.6" y="465.7" width="2.0" height="2.0" fill="#acc740"/>
<rect x="587.1" y="468.1" width="2.0" height="2.0" fill="#92c951"/>
<rect x="587.7" y="469.3" width="2.0" height="2.0" fill="#84c95c"/>
<rect x="587.6" y="470.4" width="2.0" height="2.0" fill="#76ca67"/>
<rect x="588.1" y="471.8" width="2.0" height="2.0" fill="#69ca73"/>
<rect x="588.2" y="472.6" width="2.0" height="2.0" fill="#5bcb7e"/>
<rect x="589.5" y="473.7" width="2.0" height="2.0" fill="#4ecb88"/>
<rect x="589.4" y="475.5" width="2.0" height="2.0" fill="#45c890"/>
<rect x="589.7" y="477.3" width="2.0" height="2.0" fill="#34c49e"/>
<rect x="589.8" y="478.6" width="2.0" height="2.0" fill="#2bc2a5"/>
<rect x="589.0" y="480.3" width="2.0" height="2.0" fill="#22c0ad"/>
<rect x="589.8" y="481.2" width="2.0" height="2.0" fill="#19beb4"/>
<rect x="587.4" y="482.3" width="2.0" height="2.0" fill="#1abbba"/>
<rect x="587.6" y="484.8" width="2.0" height="2.0" fill="#1bb4c7"/>
<rect x="588.1" y="485.9" width="2.0" height="2.0" fill="#1cb1ce"/>
<rect x="588.8" y="487.4" width="2.0" height="2.0" fill="#1daed4"/>
<rect x="589.5" y="488.6" width="2.0" height="2.0" fill="#1eabdb"/>
<rect x="587.9" y="490.7" width="2.0" height="2.0" fill="#22a1e3"/>
<rect x="589.6" y="492.5" width="2.0" height="2.0" fill="#259ce6"/>
<rect x="587.8" y="493.3" width="2.0" height="2.0" fill="#2798ea"/>
<rect x="588.2" y="494.9" width="2.0" height="2.0" fill="#2a93ee"/>
<rect x="589.3" y="497.4" width="2.0" height="2.0" fill="#2f89f4"/>
<rect x="588.0" y="498.7" width="2.0" height="2.0" fill="#3283f6"/>
<rect x="589.9" y="500.7" width="2.0" height="2.0" fill="#3978f9"/>
<rect x="588.0" y="501.7" width="2.0" height="2.0" fill="#3c72fa"/>
<rect x="588.2" y="502.8" width="2.0" height="2.0" fill="#3f6cfc"/>
<rect x="590.1" y="504.4" width="2.0" height="2.0" fill="#4167fb"/>
<rect x="589.1" y="505.4" width="2.0" height="2.0" fill="#4260f6"/>
<rect x="588.6" y="506.5" width="2.0" height="2.0" fill="#435af0"/>
<rect x="589.7" y="507.9" width="2.0" height="2.0" fill="#4454eb"/>
<rect x="589.7" y="509.1" width="2.0" height="2.0" fill="#454ee6"/>
<rect x="590.6" y="510.5" width="2.0" height="2.0" fill="#4548e0"/>
<rect x="589.5" y="511.7" width="2.0" height="2.0" fill="#4642da"/>
<rect x="590.8" y="512.7" width="2.0" height="2.0" fill="#443dd2"/>
<rect x="590.8" y="515.1" width="2.0" height="2.0" fill="#4234c1"/>
<rect x="591.2" y="516.4" width="2.0" height="2.0" fill="#412fb9"/>
<rect x="590.3" y="517.6" width="2.0" height="2.0" fill="#3f2bb0"/>
<rect x="588.4" y="519.4" width="2.0" height="2.0" fill="#3e26a8"/>
<rect x="581.2" y="504.6" width="2.0" height="2.0" fill="#4169fd"/>
<rect x="582.7" y="510.3" width="2.0" height="2.0" fill="#443dd2"/>
<path d="M555.2,520.8 L558.0,524.0 L561.0,527.4" fill="none" stroke="#8060b8" stroke-width="2.2" stroke-linecap="round" stroke-linejoin="round" stroke-opacity="0.8"/>
<rect x="326.8" y="556.6" width="4.3" height="1.7" fill="#3ac699"/>
<rect x="327.4" y="560.1" width="5.2" height="1.7" fill="#29c2a7"/>
<rect x="327.2" y="563.6" width="5.7" height="1.7" fill="#19beb5"/>
<rect x="327.7" y="567.1" width="5.8" height="1.7" fill="#1bb7c1"/>
<rect x="326.9" y="570.6" width="4.0" height="1.7" fill="#1cb1ce"/>
<rect x="327.1" y="574.1" width="4.9" height="1.7" fill="#1eabda"/>
<rect x="327.2" y="577.6" width="6.2" height="1.7" fill="#22a2e2"/>
<rect x="327.0" y="581.1" width="4.3" height="1.7" fill="#2799e9"/>
<rect x="327.1" y="584.6" width="5.7" height="1.7" fill="#2b8ff0"/>
<rect x="327.3" y="587.1" width="7.4" height="1.7" fill="#3185f5"/>
<rect x="344.1" y="566.1" width="5.8" height="1.7" fill="#50cb87"/>
<rect x="344.2" y="569.6" width="7.2" height="1.7" fill="#45c890"/>
<rect x="344.8" y="573.1" width="7.3" height="1.7" fill="#39c69a"/>
<rect x="346.0" y="576.6" width="5.0" height="1.7" fill="#2ec3a3"/>
<rect x="346.5" y="580.1" width="6.0" height="1.7" fill="#22c0ad"/>
<rect x="346.1" y="583.6" width="6.2" height="1.7" fill="#19bdb6"/>
<rect x="347.3" y="587.1" width="6.0" height="1.7" fill="#1ab9be"/>
<rect x="346.9" y="590.6" width="5.2" height="1.7" fill="#1bb5c6"/>
<rect x="347.8" y="594.1" width="6.0" height="1.7" fill="#1cb1cf"/>
<rect x="347.4" y="597.6" width="4.8" height="1.7" fill="#1dacd7"/>
<rect x="347.5" y="601.1" width="7.3" height="1.7" fill="#1fa7de"/>
<rect x="348.8" y="604.6" width="7.9" height="1.7" fill="#22a1e3"/>
<rect x="349.4" y="608.1" width="6.7" height="1.7" fill="#269be8"/>
<rect x="353.5" y="585.1" width="5.0" height="1.7" fill="#f9fb14"/>
<rect x="356.0" y="589.1" width="6.0" height="1.7" fill="#fbe123"/>
<rect x="358.0" y="593.6" width="5.0" height="1.7" fill="#fdc832"/>
<rect x="355.0" y="597.1" width="4.0" height="1.7" fill="#a5c841"/>
<rect x="360.0" y="600.1" width="6.0" height="1.7" fill="#f9fb14"/>
<rect x="357.0" y="603.6" width="4.0" height="1.7" fill="#61ca79"/>
<rect x="361.5" y="607.1" width="4.0" height="1.7" fill="#fbe123"/>
<rect x="352.0" y="591.6" width="3.0" height="1.7" fill="#50cb87"/>
<rect x="350.5" y="599.1" width="3.0" height="1.7" fill="#19beb4"/>
<path d="M359.5,596.0 L362.5,596.0 L362.5,600.0" fill="none" stroke="#f6f210" stroke-width="1.5" stroke-linecap="round" stroke-linejoin="round"/>
<path d="M362.5,614.0 L366.5,614.0 L366.5,618.5" fill="none" stroke="#f6f210" stroke-width="1.5" stroke-linecap="round" stroke-linejoin="round"/>
<path d="M364.2,609.0 L372.0,609.4 L381.6,607.6" fill="none" stroke="#f6f210" stroke-width="2.0" stroke-linecap="round" stroke-linejoin="round"/>
<path d="M368.0,630.6 L379.0,630.2" fill="none" stroke="#f6f210" stroke-width="1.9" stroke-linecap="round" stroke-linejoin="round"/>
<path d="M366.8,639.8 L380.2,639.6" fill="none" stroke="#f0a838" stroke-width="2.3" stroke-linecap="round" stroke-linejoin="round"/>
<rect x="371.2" y="603.2" width="2.0" height="2.0" fill="#61ca79"/>
<rect x="371.7" y="614.4" width="2.0" height="2.0" fill="#1cb4c8"/>
<rect x="375.2" y="614.4" width="2.0" height="2.0" fill="#1cb4c8"/>
<rect x="375.2" y="620.6" width="2.0" height="2.0" fill="#1daed4"/>
<rect x="361.8" y="629.9" width="2.0" height="2.0" fill="#83c95d"/>
<rect x="375.2" y="633.1" width="2.0" height="2.0" fill="#1daed4"/>
<rect x="361.8" y="637.4" width="2.0" height="2.0" fill="#1cb4c8"/>
<rect x="362.4" y="644.6" width="2.0" height="2.0" fill="#1cb4c8"/>
<rect x="368.0" y="647.3" width="2.0" height="2.0" fill="#83c95d"/>
<rect x="376.5" y="647.3" width="2.0" height="2.0" fill="#83c95d"/>
<rect x="377.6" y="647.3" width="2.0" height="2.0" fill="#83c95d"/>
<rect x="368.0" y="655.3" width="2.0" height="2.0" fill="#24c1ab"/>
<rect x="377.3" y="655.3" width="2.0" height="2.0" fill="#61ca79"/>
<rect x="378.4" y="655.3" width="2.0" height="2.0" fill="#61ca79"/>
<rect x="367.2" y="664.7" width="2.0" height="2.0" fill="#1daed4"/>
<rect x="378.1" y="664.1" width="2.0" height="2.0" fill="#1daed4"/>
<rect x="378.7" y="674.6" width="2.0" height="2.0" fill="#2d8cf3"/>
<rect x="356.0" y="625.1" width="2.0" height="2.0" fill="#1eaadc"/>
<rect x="358.4" y="624.0" width="2.0" height="2.0" fill="#35c49d"/>
<rect x="364.0" y="619.2" width="2.0" height="2.0" fill="#fbe123"/>
<rect x="365.0" y="618.1" width="2.0" height="2.0" fill="#fdc832"/>
<rect x="360.5" y="613.9" width="2.0" height="2.0" fill="#50cb87"/>
<rect x="356.5" y="612.5" width="2.0" height="2.0" fill="#19beb4"/>
<path d="M355.0,575.5 L357.0,579.0 L359.5,582.0" fill="none" stroke="#e8d838" stroke-width="1.4" stroke-linecap="round" stroke-linejoin="round"/>
<path d="M246.4,413.3 L424.2,344.2 M424.2,344.2 L560.3,433.1 M560.3,433.1 L383.0,501.4 M383.0,501.4 L246.4,413.3 M246.4,413.3 L246.4,509.2 M383.0,501.4 L383.1,598.3 M560.3,433.1 L560.3,527.8 M246.4,509.2 L383.1,598.3 M383.1,598.3 L560.3,527.8 M424.2,344.2 L424.2,442.0 M424.2,442.0 L246.4,509.2 M424.2,442.0 L560.3,527.8" fill="none" stroke="#f5b01e" stroke-width="2" stroke-linecap="round" shape-rendering="auto"/>
<g shape-rendering="auto">
<g transform="translate(292,488) scale(0.0629)">
<path d="M270,485 L270,450 L205,395 L140,312 C128,290 150,268 176,282 L232,325 L186,190 C178,160 212,148 226,172 L282,262 L290,146 C290,118 340,118 340,146 L346,250 L366,172 C370,144 416,150 414,178 L420,268 L462,226 C478,200 508,216 496,246 L470,345 L436,420 L420,485 Z" fill="#000" stroke="#fff" stroke-width="22" stroke-linejoin="round"/>
</g>
</g>
</svg><!--SCENE_END--></div>
<div id="banner" class="abs"><svg style="position:absolute;left:0;top:0;" width="80" height="52" viewBox="48 229 80 52">
<circle cx="81" cy="254.4" r="11" fill="#fff" stroke="#2f86d6" stroke-width="1.6"/>
<circle cx="81" cy="248.2" r="1.7" fill="#1f76d0"/>
<rect x="79.7" y="251.5" width="2.6" height="9.4" rx="0.6" fill="#1f76d0"/>
</svg><div style="position:absolute;left:66.8px;top:16.6px;font-size:18px;line-height:20px;font-weight:bold;color:#e6e6e6;white-space:nowrap;">Checkerboard must fit entirely within the cuboid boundaries.</div></div>
<div class="abs" style="left:32px;top:705px;width:604px;height:1px;background:#fff;"></div>
<div class="abs" style="left:32px;top:706px;width:604px;height:1px;background:#9a9a9a;"></div>
<div id="status" class="abs"><div style="position:absolute;left:10px;top:7px;font-size:18px;line-height:20px;color:#1a1a1a;white-space:nowrap;">Selected ROI [xmin, ymin, zmin, width, height, depth] : [-2 -2 -1 8 8 4].</div></div>
<div class="abs" style="left:0px;top:0px;width:0;height:0;"><div style="position:absolute;left:3.6px;top:670.4px;font-size:18px;line-height:20px;color:#1a1a1a;white-space:nowrap;letter-spacing:0.08px;transform-origin:0 0;transform:rotate(-90deg);">DATA FOR DETECTION (11)</div></div>
<svg class="abs" style="left:0;top:688px;" width="30" height="49" viewBox="0 688 30 49">
<path d="M6.8,694.8 L13.2,701.2 L19.6,694.8" fill="none" stroke="#d4d4d4" stroke-width="1.3"/>
<path d="M7,714.3 L17.5,723 L7,731.7 Z" fill="#8c8c8c"/>
<rect x="17.5" y="714.3" width="3.3" height="17.4" fill="#8c8c8c"/>
</svg>

</body>
</html>
